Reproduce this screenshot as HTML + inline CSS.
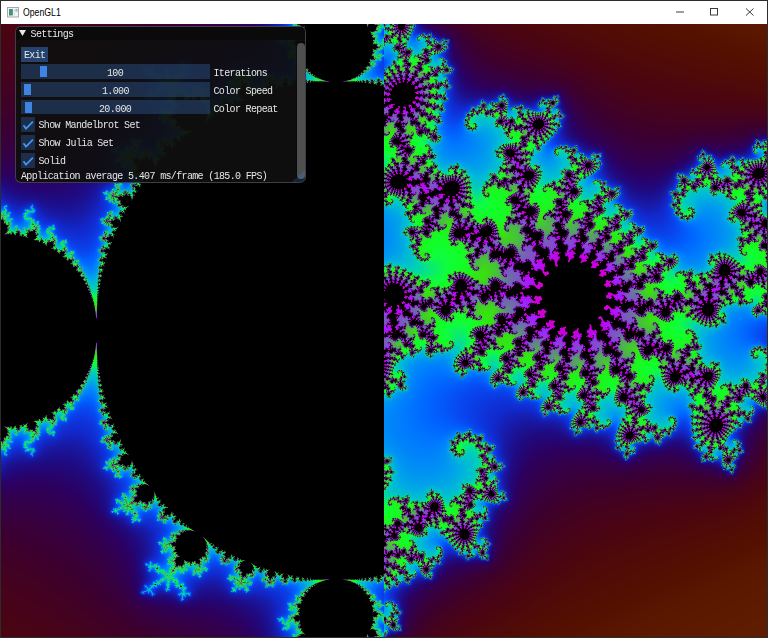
<!DOCTYPE html>
<html><head><meta charset="utf-8">
<style>
html,body{margin:0;padding:0;width:768px;height:638px;overflow:hidden;background:#3c3c3c;}
#win{position:absolute;left:0;top:0;width:768px;height:638px;background:#2e2c2b;}
#title{position:absolute;left:1px;top:1px;width:766px;height:23px;background:#fff;}
#title .t{position:absolute;left:21.8px;top:5.7px;font:10px/12px "Liberation Sans",sans-serif;color:#000;transform:scaleX(0.87);transform-origin:0 0;}
#cv{position:absolute;left:1px;top:24px;width:766px;height:613px;}
.ui{position:absolute;font-family:"Liberation Mono",monospace;color:#e6e6e6;font-size:10px;letter-spacing:-0.65px;white-space:pre;line-height:10px;}
#imw{position:absolute;left:14.6px;top:26.2px;width:291.9px;height:157.3px;border-radius:6px;background:rgba(15,15,15,0.94);box-sizing:border-box;border:1px solid rgba(110,110,128,0.5);overflow:hidden;}
#imt{position:absolute;left:0;top:0;width:100%;height:13px;background:#0a0a0a;}
.frame{position:absolute;background:rgba(41,74,122,0.54);}
.grab{position:absolute;background:#3d85e0;}
</style></head><body>
<div id="win">
<div id="title">
<svg style="position:absolute;left:5px;top:5px" width="13" height="12" viewBox="0 0 13 12">
<rect x="1.5" y="1.5" width="11" height="9.5" fill="#f4f4f4" stroke="#a8a8a8" stroke-width="1"/>
<rect x="3" y="3" width="3.8" height="6.5" fill="#3f9272"/>
<rect x="3" y="3" width="3.8" height="3" fill="#4a8fb0" opacity="0.6"/>
<rect x="7.8" y="3" width="0.8" height="6.5" fill="#d6d6d6"/>
<rect x="9.5" y="3" width="2" height="1.6" fill="#6fb0d8"/>
<rect x="9.5" y="4.6" width="2" height="1.2" fill="#8fd090"/>
</svg>
<div class="t">OpenGL1</div>
<svg style="position:absolute;left:0;top:0" width="766" height="23">
<line x1="675" y1="11" x2="683" y2="11" stroke="#3a3a3a" stroke-width="1"/>
<rect x="709.5" y="7.5" width="7" height="6.5" fill="none" stroke="#3a3a3a" stroke-width="1"/>
<line x1="745" y1="7.5" x2="752.5" y2="14.5" stroke="#3a3a3a" stroke-width="1"/>
<line x1="752.5" y1="7.5" x2="745" y2="14.5" stroke="#3a3a3a" stroke-width="1"/>
</svg>
</div>
<svg id="fb" style="position:absolute;left:1px;top:24px" width="766" height="613" shape-rendering="crispEdges"><path fill="#401" d="M0 0h16v8h-16zM488 0h48v8h-48zM0 8h8v8h-8zM496 8h56v8h-56zM0 16h8v8h-8zM512 16h64v8h-64zM0 24h8v8h-8zM536 24h56v8h-56zM552 32h56v8h-56zM576 40h48v8h-48zM592 48h56v8h-56zM600 56h80v8h-80zM616 64h104v8h-104zM640 72h128v8h-128zM672 80h96v8h-96zM760 448h8v8h-8zM752 456h16v8h-16zM736 464h32v8h-32zM688 472h64v8h-64zM640 480h96v8h-96zM608 488h104v8h-104zM592 496h88v8h-88zM576 504h72v8h-72zM560 512h64v8h-64zM552 520h56v8h-56zM544 528h48v8h-48zM528 536h48v8h-48zM520 544h40v8h-40zM512 552h40v8h-40zM504 560h40v8h-40zM488 568h40v8h-40zM0 576h8v8h-8zM480 576h40v8h-40zM0 584h24v8h-24zM464 584h40v8h-40zM0 592h40v8h-40zM456 592h40v8h-40zM0 600h48v8h-48zM440 600h40v8h-40zM0 608h64v8h-64zM432 608h40v8h-40z"/><path fill="#322" d="M16 0h8v8h-8zM32 0h40v8h-40z"/><path fill="#212" d="M24 0h8v8h-8zM128 0h120v8h-120zM56 120h8v8h-8zM488 256h8v8h-8zM560 328h8v8h-8z"/><path fill="#211" d="M72 0h56v8h-56z"/><path fill="#112" d="M248 0h8v8h-8zM24 16h16v8h-16zM272 16h16v8h-16zM272 24h16v8h-16zM272 32h16v8h-16zM264 40h32v8h-32zM272 48h24v8h-24zM208 56h16v8h-16zM248 56h16v8h-16zM16 72h8v8h-8zM208 72h8v8h-8zM16 88h8v8h-8zM32 88h128v8h-128zM176 88h32v8h-32zM152 96h16v8h-16zM16 104h8v8h-8zM32 104h8v8h-8zM152 104h24v8h-24zM136 112h24v8h-24zM112 120h16v8h-16zM136 120h24v8h-24zM112 128h8v8h-8zM112 136h8v8h-8zM288 152h8v8h-8zM88 320h8v8h-8z"/><path fill="#113" d="M256 0h24v8h-24z"/><path fill="#124" d="M280 0h8v8h-8zM136 56h24v8h-24zM176 56h32v8h-32zM152 72h8v8h-8z"/><path fill="#134" d="M288 0h8v8h-8zM160 56h16v8h-16z"/><path fill="#111" d="M296 0h8v8h-8zM368 0h8v8h-8zM24 8h8v8h-8zM72 8h240v8h-240zM16 16h8v8h-8zM40 16h232v8h-232zM288 16h8v8h-8zM304 16h8v8h-8zM48 24h224v8h-224zM288 24h8v8h-8zM304 24h8v8h-8zM48 32h224v8h-224zM288 32h8v8h-8zM304 32h8v8h-8zM304 40h8v8h-8zM232 56h8v8h-8zM264 56h32v8h-32zM320 56h8v8h-8zM272 64h24v8h-24zM304 64h8v8h-8zM216 72h80v8h-80zM304 72h8v8h-8zM280 80h16v8h-16zM304 80h8v8h-8zM208 88h88v8h-88zM304 88h8v8h-8zM144 96h8v8h-8zM168 96h128v8h-128zM304 96h8v8h-8zM40 104h112v8h-112zM176 104h120v8h-120zM304 104h8v8h-8zM376 104h8v8h-8zM112 112h24v8h-24zM160 112h136v8h-136zM304 112h8v8h-8zM128 120h8v8h-8zM160 120h136v8h-136zM304 120h8v8h-8zM64 128h48v8h-48zM128 128h168v8h-168zM304 128h8v8h-8zM64 136h48v8h-48zM120 136h176v8h-176zM304 136h8v8h-8zM264 144h32v8h-32zM304 144h8v8h-8zM152 152h8v8h-8zM272 152h16v8h-16zM48 224h8v8h-8zM104 224h8v8h-8zM96 264h8v8h-8zM376 288h8v8h-8zM376 312h8v8h-8zM376 448h8v8h-8zM376 504h8v8h-8zM216 520h8v8h-8zM232 528h8v8h-8zM240 544h8v8h-8zM376 544h8v8h-8zM320 552h8v8h-8zM360 568h8v8h-8zM296 592h8v8h-8zM368 608h8v8h-8z"/><path fill="#000" d="M304 0h64v8h-64zM312 8h56v8h-56zM312 16h56v8h-56zM312 24h56v8h-56zM312 32h56v8h-56zM312 40h48v8h-48zM320 48h32v8h-32zM328 56h16v8h-16zM312 64h64v8h-64zM392 64h16v8h-16zM312 72h64v8h-64zM392 72h16v8h-16zM312 80h64v8h-64zM312 88h72v8h-72zM312 96h72v8h-72zM312 104h64v8h-64zM312 112h64v8h-64zM312 120h64v8h-64zM312 128h64v8h-64zM312 136h64v8h-64zM312 144h64v8h-64zM304 152h72v8h-72zM392 152h8v8h-8zM144 160h232v8h-232zM448 160h8v8h-8zM136 168h240v8h-240zM128 176h248v8h-248zM128 184h248v8h-248zM120 192h256v8h-256zM120 200h256v8h-256zM112 208h264v8h-264zM0 216h32v8h-32zM112 216h264v8h-264zM0 224h48v8h-48zM112 224h264v8h-264zM0 232h64v8h-64zM104 232h272v8h-272zM0 240h72v8h-72zM104 240h272v8h-272zM520 240h8v8h-8zM544 240h8v8h-8zM560 240h24v8h-24zM720 240h8v8h-8zM0 248h80v8h-80zM104 248h272v8h-272zM552 248h40v8h-40zM0 256h80v8h-80zM104 256h272v8h-272zM456 256h8v8h-8zM544 256h56v8h-56zM0 264h88v8h-88zM104 264h296v8h-296zM528 264h8v8h-8zM544 264h56v8h-56zM0 272h88v8h-88zM96 272h304v8h-304zM544 272h56v8h-56zM0 280h88v8h-88zM96 280h280v8h-280zM528 280h8v8h-8zM544 280h56v8h-56zM704 280h8v8h-8zM0 288h88v8h-88zM96 288h280v8h-280zM544 288h48v8h-48zM0 296h376v8h-376zM568 296h16v8h-16zM592 296h8v8h-8zM0 304h376v8h-376zM0 312h376v8h-376zM0 320h88v8h-88zM96 320h280v8h-280zM0 328h88v8h-88zM96 328h280v8h-280zM0 336h88v8h-88zM104 336h272v8h-272zM0 344h80v8h-80zM104 344h272v8h-272zM0 352h80v8h-80zM104 352h272v8h-272zM0 360h72v8h-72zM104 360h272v8h-272zM0 368h64v8h-64zM104 368h272v8h-272zM0 376h56v8h-56zM112 376h264v8h-264zM0 384h48v8h-48zM112 384h264v8h-264zM0 392h32v8h-32zM112 392h264v8h-264zM120 400h256v8h-256zM712 400h8v8h-8zM120 408h256v8h-256zM120 416h256v8h-256zM128 424h248v8h-248zM120 432h256v8h-256zM136 440h240v8h-240zM144 448h232v8h-232zM152 456h224v8h-224zM136 464h16v8h-16zM160 464h216v8h-216zM160 472h216v8h-216zM168 480h208v8h-208zM176 488h200v8h-200zM192 496h184v8h-184zM192 504h184v8h-184zM176 512h24v8h-24zM208 512h176v8h-176zM176 520h24v8h-24zM224 520h152v8h-152zM184 528h16v8h-16zM240 528h136v8h-136zM256 536h120v8h-120zM288 544h88v8h-88zM328 552h16v8h-16zM312 560h40v8h-40zM304 568h56v8h-56zM304 576h64v8h-64zM304 584h64v8h-64zM304 592h64v8h-64zM304 600h64v8h-64zM304 608h56v8h-56z"/><path fill="#1a8" d="M376 0h8v8h-8zM496 136h8v8h-8zM528 136h8v8h-8zM552 152h8v8h-8zM576 168h8v8h-8zM720 168h8v8h-8zM24 200h8v8h-8zM448 320h8v8h-8zM392 336h8v8h-8zM544 368h8v8h-8zM576 376h8v8h-8zM472 440h8v8h-8zM408 472h8v8h-8z"/><path fill="#376" d="M384 0h8v8h-8zM544 80h8v8h-8zM592 136h8v8h-8zM712 352h8v8h-8zM640 376h8v8h-8zM448 416h8v8h-8zM456 520h8v8h-8z"/><path fill="#324" d="M392 0h8v8h-8zM392 96h8v8h-8zM504 120h8v8h-8zM712 160h8v8h-8zM744 168h8v8h-8zM488 200h8v8h-8zM584 200h8v8h-8zM448 208h8v8h-8zM472 224h8v8h-8zM440 288h8v8h-8zM496 304h8v8h-8zM512 320h8v8h-8zM464 336h8v8h-8zM624 352h8v8h-8zM664 352h8v8h-8zM704 368h8v8h-8zM392 504h8v8h-8z"/><path fill="#314" d="M400 0h8v8h-8zM8 120h8v8h-8zM8 128h8v8h-8zM8 136h8v8h-8zM584 136h8v8h-8zM384 152h8v8h-8zM448 152h8v8h-8zM456 160h8v8h-8zM568 160h8v8h-8zM416 168h8v8h-8zM424 192h8v8h-8zM760 200h8v8h-8zM560 208h8v8h-8zM592 216h8v8h-8zM488 224h8v8h-8zM616 240h8v8h-8zM624 256h8v8h-8zM720 264h8v8h-8zM624 280h8v8h-8zM472 304h8v8h-8zM600 320h8v8h-8zM536 328h8v8h-8zM608 328h8v8h-8zM576 392h8v8h-8zM464 464h8v8h-8zM392 496h8v8h-8zM464 504h8v8h-8z"/><path fill="#268" d="M408 0h8v8h-8zM472 80h8v8h-8zM592 128h8v8h-8zM696 136h8v8h-8zM760 320h8v8h-8zM552 384h8v8h-8zM568 392h8v8h-8zM688 400h8v8h-8zM472 408h8v8h-8zM496 440h8v8h-8zM400 552h8v8h-8z"/><path fill="#219" d="M416 0h8v8h-8zM560 96h8v8h-8zM560 104h8v8h-8zM712 128h8v8h-8zM88 160h8v8h-8zM632 168h8v8h-8zM648 168h8v8h-8zM40 176h8v8h-8zM72 176h16v8h-16zM56 184h16v8h-16zM520 400h16v8h-16zM544 400h16v8h-16zM512 408h8v8h-8zM584 408h8v8h-8zM736 408h8v8h-8zM504 416h8v8h-8zM48 424h32v8h-32zM504 424h8v8h-8zM16 432h8v8h-8zM32 432h8v8h-8zM80 432h8v8h-8zM504 432h8v8h-8zM0 440h8v8h-8zM88 440h8v8h-8zM504 440h8v8h-8zM96 456h8v8h-8zM488 488h8v8h-8zM120 496h8v8h-8zM432 544h8v8h-8zM200 560h16v8h-16zM152 568h8v8h-8zM168 568h8v8h-8zM224 568h8v8h-8zM248 576h16v8h-16zM264 592h8v8h-8z"/><path fill="#206" d="M424 0h8v8h-8zM448 16h8v8h-8zM448 24h8v8h-8zM456 40h8v8h-8zM464 56h8v8h-8zM504 64h8v8h-8zM704 120h8v8h-8zM736 120h8v8h-8zM624 144h8v8h-8zM664 144h8v8h-8zM0 152h8v8h-8zM632 152h24v8h-24zM544 416h24v8h-24zM528 424h8v8h-8zM600 424h8v8h-8zM648 424h16v8h-16zM680 424h8v8h-8zM520 432h8v8h-8zM712 440h8v8h-8zM16 448h48v8h-48zM512 448h8v8h-8zM0 456h8v8h-8zM56 456h24v8h-24zM512 456h8v8h-8zM72 464h16v8h-16zM80 472h8v8h-8zM88 480h8v8h-8zM96 488h8v8h-8zM496 488h8v8h-8zM104 496h8v8h-8zM112 504h8v8h-8zM120 512h8v8h-8zM120 520h8v8h-8zM128 528h8v8h-8zM128 536h8v8h-8zM448 536h24v8h-24zM480 536h8v8h-8zM128 544h8v8h-8zM432 552h8v8h-8zM416 560h8v8h-8zM168 576h8v8h-8zM192 576h24v8h-24zM224 584h16v8h-16zM240 592h8v8h-8zM400 592h8v8h-8zM248 600h8v8h-8zM248 608h8v8h-8zM392 608h8v8h-8z"/><path fill="#305" d="M432 0h8v8h-8zM456 32h8v8h-8zM464 40h8v8h-8zM464 48h16v8h-16zM472 56h32v8h-32zM512 64h32v8h-32zM560 72h8v8h-8zM568 88h8v8h-8zM576 96h8v8h-8zM576 104h16v8h-16zM592 112h8v8h-8zM744 112h8v8h-8zM608 120h8v8h-8zM688 120h8v8h-8zM712 120h24v8h-24zM616 128h8v8h-8zM672 128h16v8h-16zM0 136h8v8h-8zM624 136h48v8h-48zM0 144h8v8h-8zM640 144h16v8h-16zM760 392h8v8h-8zM752 400h8v8h-8zM744 416h8v8h-8zM552 424h40v8h-40zM744 424h8v8h-8zM536 432h80v8h-80zM640 432h16v8h-16zM680 432h8v8h-8zM528 440h24v8h-24zM696 440h16v8h-16zM736 440h8v8h-8zM520 448h16v8h-16zM520 456h8v8h-8zM0 464h64v8h-64zM520 464h8v8h-8zM16 472h56v8h-56zM512 472h8v8h-8zM56 480h32v8h-32zM512 480h8v8h-8zM64 488h24v8h-24zM504 488h8v8h-8zM80 496h16v8h-16zM496 496h8v8h-8zM88 504h16v8h-16zM496 504h8v8h-8zM96 512h16v8h-16zM104 520h16v8h-16zM112 528h8v8h-8zM112 536h16v8h-16zM120 544h8v8h-8zM448 544h8v8h-8zM120 552h8v8h-8zM440 552h8v8h-8zM128 560h8v8h-8zM424 560h8v8h-8zM128 568h8v8h-8zM416 568h8v8h-8zM136 576h16v8h-16zM408 576h8v8h-8zM160 584h48v8h-48zM192 592h40v8h-40zM216 600h24v8h-24zM224 608h24v8h-24z"/><path fill="#304" d="M440 0h8v8h-8zM448 8h8v8h-8zM456 16h8v8h-8zM456 24h8v8h-8zM464 32h8v8h-8zM472 40h16v8h-16zM480 48h24v8h-24zM504 56h40v8h-40zM560 64h8v8h-8zM568 72h8v8h-8zM568 80h16v8h-16zM576 88h8v8h-8zM584 96h16v8h-16zM592 104h16v8h-16zM752 104h16v8h-16zM600 112h24v8h-24zM696 112h48v8h-48zM0 120h8v8h-8zM400 120h8v8h-8zM616 120h72v8h-72zM0 128h8v8h-8zM624 128h48v8h-48zM520 144h8v8h-8zM520 152h8v8h-8zM752 152h8v8h-8zM400 160h8v8h-8zM440 168h8v8h-8zM512 176h8v8h-8zM448 184h8v8h-8zM600 208h8v8h-8zM576 224h8v8h-8zM568 232h8v8h-8zM584 232h8v8h-8zM608 248h8v8h-8zM384 256h8v8h-8zM632 256h8v8h-8zM608 264h8v8h-8zM608 272h8v8h-8zM632 280h8v8h-8zM664 280h8v8h-8zM696 280h8v8h-8zM608 320h8v8h-8zM648 320h16v8h-16zM584 344h8v8h-8zM616 344h8v8h-8zM624 368h8v8h-8zM704 400h8v8h-8zM760 400h8v8h-8zM752 408h8v8h-8zM752 416h8v8h-8zM656 432h24v8h-24zM744 432h8v8h-8zM552 440h144v8h-144zM536 448h40v8h-40zM712 448h16v8h-16zM528 456h24v8h-24zM528 464h16v8h-16zM0 472h16v8h-16zM520 472h16v8h-16zM0 480h56v8h-56zM520 480h8v8h-8zM0 488h64v8h-64zM512 488h8v8h-8zM24 496h56v8h-56zM504 496h16v8h-16zM48 504h40v8h-40zM504 504h8v8h-8zM56 512h40v8h-40zM496 512h16v8h-16zM72 520h32v8h-32zM496 520h8v8h-8zM80 528h32v8h-32zM496 528h8v8h-8zM88 536h24v8h-24zM488 536h8v8h-8zM96 544h24v8h-24zM456 544h24v8h-24zM104 552h16v8h-16zM448 552h8v8h-8zM112 560h16v8h-16zM432 560h16v8h-16zM120 568h8v8h-8zM424 568h8v8h-8zM120 576h16v8h-16zM416 576h8v8h-8zM136 584h24v8h-24zM408 584h8v8h-8zM144 592h48v8h-48zM408 592h8v8h-8zM168 600h48v8h-48zM184 608h40v8h-40zM400 608h8v8h-8z"/><path fill="#303" d="M448 0h8v8h-8zM456 8h8v8h-8zM464 16h8v8h-8zM464 24h16v8h-16zM472 32h16v8h-16zM488 40h16v8h-16zM504 48h24v8h-24zM392 56h8v8h-8zM544 56h16v8h-16zM568 64h8v8h-8zM384 72h8v8h-8zM408 72h8v8h-8zM576 72h8v8h-8zM400 80h8v8h-8zM584 80h8v8h-8zM584 88h16v8h-16zM528 96h8v8h-8zM600 96h16v8h-16zM0 104h8v8h-8zM608 104h24v8h-24zM736 104h16v8h-16zM0 112h8v8h-8zM624 112h72v8h-72zM504 128h8v8h-8zM456 200h8v8h-8zM544 232h8v8h-8zM528 248h8v8h-8zM480 264h8v8h-8zM520 264h8v8h-8zM672 272h8v8h-8zM536 280h8v8h-8zM552 304h8v8h-8zM640 320h8v8h-8zM760 408h8v8h-8zM752 424h8v8h-8zM576 448h80v8h-80zM680 448h32v8h-32zM736 448h8v8h-8zM552 456h40v8h-40zM544 464h24v8h-24zM536 472h16v8h-16zM528 480h16v8h-16zM520 488h16v8h-16zM0 496h24v8h-24zM520 496h8v8h-8zM0 504h48v8h-48zM512 504h8v8h-8zM16 512h40v8h-40zM512 512h8v8h-8zM40 520h32v8h-32zM504 520h8v8h-8zM48 528h32v8h-32zM64 536h24v8h-24zM496 536h8v8h-8zM72 544h24v8h-24zM480 544h8v8h-8zM80 552h24v8h-24zM456 552h16v8h-16zM88 560h24v8h-24zM448 560h8v8h-8zM96 568h24v8h-24zM432 568h16v8h-16zM104 576h16v8h-16zM424 576h8v8h-8zM120 584h16v8h-16zM416 584h8v8h-8zM128 592h16v8h-16zM416 592h8v8h-8zM144 600h24v8h-24zM408 600h8v8h-8zM152 608h32v8h-32z"/><path fill="#402" d="M456 0h32v8h-32zM464 8h32v8h-32zM472 16h40v8h-40zM488 24h48v8h-48zM0 32h8v8h-8zM496 32h56v8h-56zM0 40h8v8h-8zM520 40h56v8h-56zM0 48h8v8h-8zM552 48h40v8h-40zM0 56h8v8h-8zM568 56h32v8h-32zM0 64h8v8h-8zM584 64h32v8h-32zM0 72h8v8h-8zM592 72h48v8h-48zM0 80h8v8h-8zM600 80h72v8h-72zM616 88h152v8h-152zM632 96h136v8h-136zM760 424h8v8h-8zM760 432h8v8h-8zM752 440h16v8h-16zM744 448h16v8h-16zM648 456h64v8h-64zM728 456h24v8h-24zM600 464h136v8h-136zM568 472h120v8h-120zM560 480h80v8h-80zM544 488h64v8h-64zM536 496h56v8h-56zM528 504h48v8h-48zM528 512h32v8h-32zM520 520h32v8h-32zM0 528h16v8h-16zM512 528h32v8h-32zM0 536h32v8h-32zM504 536h24v8h-24zM0 544h48v8h-48zM496 544h24v8h-24zM0 552h64v8h-64zM488 552h24v8h-24zM0 560h72v8h-72zM472 560h32v8h-32zM0 568h80v8h-80zM456 568h32v8h-32zM8 576h80v8h-80zM440 576h40v8h-40zM24 584h80v8h-80zM432 584h32v8h-32zM40 592h72v8h-72zM424 592h32v8h-32zM48 600h72v8h-72zM424 600h16v8h-16zM64 608h64v8h-64zM416 608h16v8h-16z"/><path fill="#501" d="M536 0h16v8h-16zM552 8h16v8h-16zM576 16h8v8h-8zM592 24h16v8h-16zM608 32h16v8h-16zM624 40h24v8h-24zM648 48h24v8h-24zM680 56h32v8h-32zM720 64h32v8h-32zM752 472h8v8h-8zM736 480h8v8h-8zM712 488h16v8h-16zM680 496h24v8h-24zM648 504h24v8h-24zM624 512h24v8h-24zM608 520h16v8h-16zM592 528h16v8h-16zM576 536h16v8h-16zM560 544h16v8h-16zM552 552h16v8h-16zM544 560h8v8h-8zM528 568h16v8h-16zM520 576h8v8h-8zM504 584h16v8h-16zM496 592h8v8h-8zM480 600h8v8h-8zM472 608h8v8h-8z"/><path fill="#511" d="M552 0h16v8h-16zM568 8h24v8h-24zM584 16h24v8h-24zM608 24h24v8h-24zM624 32h24v8h-24zM648 40h32v8h-32zM672 48h40v8h-40zM712 56h32v8h-32zM752 64h16v8h-16zM760 472h8v8h-8zM744 480h16v8h-16zM728 488h16v8h-16zM704 496h24v8h-24zM672 504h32v8h-32zM648 512h32v8h-32zM624 520h32v8h-32zM608 528h24v8h-24zM592 536h24v8h-24zM576 544h24v8h-24zM568 552h16v8h-16zM552 560h16v8h-16zM544 568h16v8h-16zM528 576h16v8h-16zM520 584h8v8h-8zM504 592h16v8h-16zM488 600h16v8h-16zM480 608h16v8h-16z"/><path fill="#510" d="M568 0h200v8h-200zM592 8h176v8h-176zM608 16h160v8h-160zM632 24h136v8h-136zM648 32h120v8h-120zM680 40h88v8h-88zM712 48h56v8h-56zM744 56h24v8h-24zM760 480h8v8h-8zM744 488h24v8h-24zM728 496h40v8h-40zM704 504h64v8h-64zM680 512h88v8h-88zM656 520h112v8h-112zM632 528h136v8h-136zM616 536h152v8h-152zM600 544h168v8h-168zM584 552h184v8h-184zM568 560h192v8h-192zM560 568h184v8h-184zM544 576h192v8h-192zM528 584h192v8h-192zM520 592h184v8h-184zM504 600h184v8h-184zM496 608h176v8h-176z"/><path fill="#411" d="M8 8h8v8h-8z"/><path fill="#444" d="M16 8h8v8h-8zM32 8h8v8h-8zM56 8h16v8h-16zM224 64h16v8h-16zM216 80h24v8h-24zM104 96h8v8h-8zM40 112h8v8h-8zM40 136h8v8h-8zM56 136h8v8h-8zM192 144h8v8h-8zM248 144h8v8h-8zM24 152h8v8h-8zM448 200h8v8h-8zM744 200h8v8h-8zM736 248h8v8h-8zM696 392h8v8h-8z"/><path fill="#222" d="M40 8h8v8h-8zM208 40h8v8h-8zM248 40h8v8h-8zM264 48h8v8h-8zM240 64h8v8h-8zM56 112h8v8h-8zM88 112h8v8h-8zM32 120h24v8h-24zM64 120h16v8h-16zM88 120h8v8h-8zM32 128h24v8h-24zM32 136h8v8h-8zM48 136h8v8h-8zM16 144h8v8h-8zM40 144h8v8h-8zM80 144h8v8h-8zM120 144h8v8h-8zM136 144h8v8h-8zM152 144h8v8h-8zM168 144h8v8h-8zM200 144h16v8h-16zM240 144h8v8h-8zM80 152h8v8h-8zM120 152h8v8h-8zM168 152h16v8h-16zM200 152h8v8h-8zM240 152h16v8h-16zM264 152h8v8h-8z"/><path fill="#333" d="M48 8h8v8h-8zM296 16h8v8h-8zM240 40h8v8h-8zM232 48h16v8h-16zM240 80h8v8h-8zM272 80h8v8h-8zM56 96h8v8h-8zM112 96h8v8h-8zM64 112h24v8h-24zM56 128h8v8h-8zM24 144h16v8h-16zM48 144h8v8h-8zM64 144h16v8h-16zM88 144h8v8h-8zM104 144h8v8h-8zM128 144h8v8h-8zM144 144h8v8h-8zM160 144h8v8h-8zM176 144h16v8h-16zM216 144h24v8h-24zM256 144h8v8h-8zM32 152h48v8h-48zM88 152h24v8h-24zM128 152h24v8h-24zM160 152h8v8h-8zM184 152h16v8h-16zM208 152h32v8h-32zM256 152h8v8h-8zM744 256h8v8h-8zM424 272h8v8h-8zM576 368h8v8h-8z"/><path fill="#164" d="M368 8h8v8h-8zM368 600h8v8h-8z"/><path fill="#08d" d="M376 8h8v8h-8zM608 392h8v8h-8zM376 600h8v8h-8z"/><path fill="#365" d="M384 8h8v8h-8zM392 16h8v8h-8zM432 80h8v8h-8zM520 88h8v8h-8zM544 104h8v8h-8zM568 128h8v8h-8zM560 144h8v8h-8zM760 168h8v8h-8zM672 176h8v8h-8zM736 176h8v8h-8zM408 200h8v8h-8zM456 328h8v8h-8zM728 360h8v8h-8zM720 408h8v8h-8zM472 416h8v8h-8zM480 424h8v8h-8zM424 496h8v8h-8zM448 512h8v8h-8zM424 536h8v8h-8zM400 544h8v8h-8zM384 592h8v8h-8z"/><path fill="#354" d="M392 8h8v8h-8zM424 24h8v8h-8zM416 40h8v8h-8zM424 48h8v8h-8zM424 104h8v8h-8zM576 144h8v8h-8zM736 144h8v8h-8zM496 152h8v8h-8zM696 152h8v8h-8zM672 168h8v8h-8zM624 216h8v8h-8zM752 240h8v8h-8zM448 256h8v8h-8zM432 264h8v8h-8zM736 272h8v8h-8zM760 272h8v8h-8zM392 312h8v8h-8zM408 320h8v8h-8zM472 336h8v8h-8zM560 352h8v8h-8zM520 360h8v8h-8zM584 384h8v8h-8zM472 464h8v8h-8zM456 472h8v8h-8zM464 480h8v8h-8z"/><path fill="#374" d="M400 8h8v8h-8zM392 40h8v8h-8zM512 96h8v8h-8zM520 120h8v8h-8zM416 128h8v8h-8zM528 160h8v8h-8zM464 168h8v8h-8zM504 176h8v8h-8zM464 232h8v8h-8zM736 240h8v8h-8zM752 256h8v8h-8zM656 264h8v8h-8zM720 272h8v8h-8zM464 288h8v8h-8zM392 352h8v8h-8zM384 360h8v8h-8zM552 376h8v8h-8zM696 408h8v8h-8zM712 416h8v8h-8zM480 440h8v8h-8zM432 496h8v8h-8zM440 504h8v8h-8zM408 520h8v8h-8zM392 536h8v8h-8zM384 552h8v8h-8z"/><path fill="#16d" d="M408 8h8v8h-8zM32 192h8v8h-8zM64 216h8v8h-8zM96 400h8v8h-8zM464 400h8v8h-8zM120 464h8v8h-8zM376 560h8v8h-8zM288 568h8v8h-8z"/><path fill="#279" d="M416 8h8v8h-8zM480 512h8v8h-8zM384 560h8v8h-8z"/><path fill="#258" d="M424 8h8v8h-8zM544 384h8v8h-8zM720 440h8v8h-8zM392 592h8v8h-8z"/><path fill="#218" d="M432 8h8v8h-8zM456 64h8v8h-8zM512 72h8v8h-8zM568 112h8v8h-8zM584 120h8v8h-8zM744 120h8v8h-8zM600 128h8v8h-8zM720 128h8v8h-8zM608 144h8v8h-8zM616 152h8v8h-8zM664 152h8v8h-8zM0 160h8v8h-8zM80 160h8v8h-8zM624 160h8v8h-8zM656 160h8v8h-8zM8 168h32v8h-32zM64 168h24v8h-24zM640 168h8v8h-8zM48 176h24v8h-24zM760 384h8v8h-8zM536 400h8v8h-8zM520 408h16v8h-16zM560 408h8v8h-8zM512 416h8v8h-8zM600 416h8v8h-8zM664 416h8v8h-8zM680 416h8v8h-8zM512 424h8v8h-8zM608 424h8v8h-8zM688 424h8v8h-8zM40 432h40v8h-40zM8 440h8v8h-8zM72 440h16v8h-16zM88 448h8v8h-8zM504 448h8v8h-8zM88 456h8v8h-8zM504 456h8v8h-8zM96 464h8v8h-8zM504 464h8v8h-8zM496 480h8v8h-8zM104 488h8v8h-8zM128 504h8v8h-8zM136 512h8v8h-8zM136 520h8v8h-8zM136 528h8v8h-8zM136 536h8v8h-8zM440 536h8v8h-8zM136 544h8v8h-8zM136 552h8v8h-8zM136 568h8v8h-8zM160 568h8v8h-8zM192 568h8v8h-8zM216 568h8v8h-8zM176 576h8v8h-8zM232 576h16v8h-16zM248 584h16v8h-16zM256 592h8v8h-8zM264 600h8v8h-8zM264 608h8v8h-8z"/><path fill="#216" d="M440 8h8v8h-8zM696 120h8v8h-8zM8 152h8v8h-8zM736 432h8v8h-8z"/><path fill="#412" d="M8 16h8v8h-8zM8 24h8v8h-8zM8 32h8v8h-8zM8 40h8v8h-8zM8 48h8v8h-8zM8 56h8v8h-8z"/><path fill="#131" d="M368 16h8v8h-8zM88 280h8v8h-8zM184 504h8v8h-8z"/><path fill="#2a8" d="M376 16h8v8h-8zM472 88h8v8h-8zM104 168h8v8h-8zM472 448h8v8h-8zM376 608h8v8h-8z"/><path fill="#199" d="M384 16h8v8h-8zM528 128h8v8h-8zM448 336h8v8h-8zM488 344h8v8h-8zM648 360h8v8h-8zM736 392h8v8h-8zM408 536h8v8h-8zM368 568h8v8h-8z"/><path fill="#286" d="M400 16h8v8h-8zM424 16h8v8h-8zM432 88h8v8h-8zM496 120h8v8h-8zM496 128h8v8h-8zM728 144h8v8h-8zM712 296h8v8h-8zM760 344h8v8h-8zM752 352h8v8h-8zM544 360h8v8h-8zM664 360h8v8h-8zM72 368h8v8h-8zM688 376h8v8h-8zM112 432h8v8h-8zM448 472h8v8h-8zM288 592h8v8h-8z"/><path fill="#08e" d="M408 16h8v8h-8zM368 48h8v8h-8zM440 112h8v8h-8zM472 112h8v8h-8zM472 120h8v8h-8zM448 128h24v8h-24zM544 128h8v8h-8zM712 192h8v8h-8zM712 216h8v8h-8zM664 224h8v8h-8zM696 232h8v8h-8zM80 240h8v8h-8zM728 288h8v8h-8zM744 288h8v8h-8zM416 336h8v8h-8zM408 344h8v8h-8zM680 376h8v8h-8zM384 416h8v8h-8zM392 424h8v8h-8zM400 432h8v8h-8zM432 432h8v8h-8zM408 440h24v8h-24zM208 528h8v8h-8zM296 560h8v8h-8z"/><path fill="#0ad" d="M416 16h8v8h-8zM488 104h8v8h-8zM488 112h8v8h-8zM440 136h8v8h-8zM552 136h8v8h-8zM472 144h8v8h-8zM720 144h8v8h-8zM392 184h8v8h-8zM720 184h8v8h-8zM728 200h8v8h-8zM728 208h8v8h-8zM400 216h8v8h-8zM728 216h8v8h-8zM400 224h8v8h-8zM384 232h16v8h-16zM696 240h8v8h-8zM744 280h8v8h-8zM704 304h8v8h-8zM416 328h8v8h-8zM704 328h8v8h-8zM400 336h8v8h-8zM720 344h8v8h-8zM736 344h16v8h-16zM656 368h8v8h-8zM680 368h8v8h-8zM616 384h8v8h-8zM448 432h8v8h-8zM392 440h8v8h-8zM456 440h8v8h-8zM392 448h8v8h-8zM448 448h8v8h-8zM400 456h8v8h-8zM440 456h16v8h-16zM408 464h16v8h-16zM424 520h8v8h-8z"/><path fill="#346" d="M432 16h8v8h-8zM24 32h16v8h-16zM104 64h8v8h-8zM720 432h8v8h-8z"/><path fill="#367" d="M440 16h8v8h-8zM432 24h8v8h-8zM432 40h8v8h-8zM472 520h16v8h-16z"/><path fill="#234" d="M16 24h8v8h-8zM24 40h8v8h-8zM48 40h56v8h-56zM128 40h16v8h-16zM192 40h16v8h-16zM144 48h56v8h-56zM112 56h16v8h-16zM32 64h64v8h-64zM128 64h16v8h-16zM168 64h16v8h-16zM192 64h8v8h-8zM32 80h64v8h-64zM136 80h8v8h-8zM168 80h40v8h-40zM24 88h8v8h-8zM296 152h8v8h-8z"/><path fill="#568" d="M24 24h8v8h-8z"/><path fill="#457" d="M32 24h8v8h-8z"/><path fill="#356" d="M40 24h8v8h-8zM480 80h8v8h-8zM584 144h8v8h-8zM736 192h8v8h-8zM632 200h8v8h-8zM760 376h8v8h-8zM736 384h8v8h-8zM656 408h8v8h-8zM488 472h8v8h-8zM472 488h8v8h-8z"/><path fill="#555" d="M296 24h8v8h-8zM296 32h8v8h-8zM296 40h8v8h-8zM296 48h8v8h-8zM296 56h8v8h-8zM248 64h24v8h-24zM296 64h8v8h-8zM296 72h8v8h-8zM248 80h24v8h-24zM296 80h8v8h-8zM296 88h8v8h-8zM48 96h8v8h-8zM72 96h8v8h-8zM96 96h8v8h-8zM128 96h8v8h-8zM296 96h8v8h-8zM296 104h8v8h-8zM296 112h8v8h-8zM296 120h8v8h-8zM296 128h8v8h-8zM296 136h8v8h-8zM296 144h8v8h-8z"/><path fill="#153" d="M368 24h8v8h-8zM352 48h8v8h-8zM120 424h8v8h-8zM296 600h8v8h-8z"/><path fill="#19b" d="M376 24h8v8h-8zM432 128h8v8h-8zM608 176h8v8h-8zM760 176h8v8h-8zM72 232h8v8h-8zM80 360h8v8h-8zM48 400h8v8h-8zM8 408h8v8h-8zM712 424h8v8h-8zM160 512h8v8h-8zM200 536h8v8h-8zM176 560h8v8h-8zM232 560h8v8h-8zM376 576h8v8h-8z"/><path fill="#09e" d="M384 24h8v8h-8zM480 112h8v8h-8zM480 120h8v8h-8zM440 128h8v8h-8zM472 128h16v8h-16zM536 128h8v8h-8zM464 136h16v8h-16zM544 136h8v8h-8zM704 176h8v8h-8zM696 184h24v8h-24zM384 192h8v8h-8zM384 200h16v8h-16zM720 200h8v8h-8zM384 208h16v8h-16zM720 208h8v8h-8zM384 216h16v8h-16zM720 216h8v8h-8zM384 224h8v8h-8zM88 248h8v8h-8zM712 304h8v8h-8zM704 312h16v8h-16zM712 320h8v8h-8zM712 328h16v8h-16zM408 336h8v8h-8zM720 336h24v8h-24zM88 360h8v8h-8zM392 368h8v8h-8zM384 376h8v8h-8zM656 376h16v8h-16zM664 384h8v8h-8zM384 424h8v8h-8zM440 424h8v8h-8zM392 432h8v8h-8zM440 432h8v8h-8zM400 440h8v8h-8zM432 440h16v8h-16zM400 448h48v8h-48zM416 456h8v8h-8zM424 512h8v8h-8z"/><path fill="#277" d="M392 24h8v8h-8zM464 88h8v8h-8zM552 96h8v8h-8zM760 128h8v8h-8zM752 320h8v8h-8zM688 392h8v8h-8zM104 408h8v8h-8zM480 416h8v8h-8zM448 424h8v8h-8zM392 552h8v8h-8z"/><path fill="#425" d="M400 24h8v8h-8zM496 80h8v8h-8zM504 96h8v8h-8zM520 112h8v8h-8zM400 136h8v8h-8zM440 152h8v8h-8zM384 160h8v8h-8zM416 176h8v8h-8zM456 176h8v8h-8zM552 184h8v8h-8zM592 184h8v8h-8zM512 192h8v8h-8zM624 240h8v8h-8zM656 240h8v8h-8zM728 256h8v8h-8zM696 288h8v8h-8zM416 304h8v8h-8zM472 320h8v8h-8zM520 320h8v8h-8zM504 328h8v8h-8zM680 328h8v8h-8zM552 368h8v8h-8zM720 376h8v8h-8zM632 384h8v8h-8zM720 400h8v8h-8zM712 408h8v8h-8zM408 528h8v8h-8z"/><path fill="#289" d="M408 24h8v8h-8zM400 360h8v8h-8z"/><path fill="#288" d="M416 24h8v8h-8zM432 96h8v8h-8zM752 120h8v8h-8zM720 136h8v8h-8zM688 152h8v8h-8zM112 176h8v8h-8zM704 232h8v8h-8zM424 328h8v8h-8zM720 416h8v8h-8zM424 464h8v8h-8zM216 528h8v8h-8zM232 544h8v8h-8zM384 576h8v8h-8z"/><path fill="#249" d="M440 24h8v8h-8zM504 72h8v8h-8zM672 152h8v8h-8zM736 400h8v8h-8zM664 408h8v8h-8zM640 416h8v8h-8zM456 528h8v8h-8zM408 552h8v8h-8zM392 576h8v8h-8z"/><path fill="#403" d="M480 24h8v8h-8zM488 32h8v8h-8zM504 40h16v8h-16zM528 48h24v8h-24zM560 56h8v8h-8zM576 64h8v8h-8zM584 72h8v8h-8zM592 80h8v8h-8zM0 88h8v8h-8zM600 88h16v8h-16zM0 96h8v8h-8zM616 96h16v8h-16zM632 104h104v8h-104zM760 416h8v8h-8zM752 432h8v8h-8zM744 440h8v8h-8zM656 448h24v8h-24zM592 456h56v8h-56zM712 456h16v8h-16zM568 464h32v8h-32zM552 472h16v8h-16zM544 480h16v8h-16zM536 488h8v8h-8zM528 496h8v8h-8zM520 504h8v8h-8zM0 512h16v8h-16zM520 512h8v8h-8zM0 520h40v8h-40zM512 520h8v8h-8zM16 528h32v8h-32zM504 528h8v8h-8zM32 536h32v8h-32zM48 544h24v8h-24zM488 544h8v8h-8zM64 552h16v8h-16zM472 552h16v8h-16zM72 560h16v8h-16zM456 560h16v8h-16zM80 568h16v8h-16zM448 568h8v8h-8zM88 576h16v8h-16zM432 576h8v8h-8zM104 584h16v8h-16zM424 584h8v8h-8zM112 592h16v8h-16zM120 600h24v8h-24zM416 600h8v8h-8zM128 608h24v8h-24zM408 608h8v8h-8z"/><path fill="#223" d="M16 32h8v8h-8zM216 40h24v8h-24zM256 40h8v8h-8zM208 48h16v8h-16zM32 56h64v8h-64zM136 96h8v8h-8zM32 112h8v8h-8zM80 120h8v8h-8zM96 120h16v8h-16zM16 152h8v8h-8zM480 272h8v8h-8z"/><path fill="#235" d="M40 32h8v8h-8zM32 40h8v8h-8zM120 40h8v8h-8zM144 40h48v8h-48zM32 48h8v8h-8zM120 48h8v8h-8zM96 64h8v8h-8zM144 64h24v8h-24zM184 64h8v8h-8zM200 64h8v8h-8zM24 72h8v8h-8zM144 80h24v8h-24zM24 120h8v8h-8zM24 128h8v8h-8z"/><path fill="#275" d="M368 32h8v8h-8zM400 176h8v8h-8zM32 400h8v8h-8zM192 536h8v8h-8z"/><path fill="#17c" d="M376 32h8v8h-8zM464 104h8v8h-8zM752 128h8v8h-8zM96 216h8v8h-8zM24 424h8v8h-8zM168 496h8v8h-8zM440 512h8v8h-8zM152 536h8v8h-8zM224 536h8v8h-8zM200 544h8v8h-8zM248 552h8v8h-8z"/><path fill="#07e" d="M384 32h8v8h-8zM656 216h8v8h-8zM744 320h8v8h-8zM80 368h8v8h-8zM16 408h8v8h-8zM160 536h8v8h-8zM184 544h8v8h-8zM176 552h8v8h-8z"/><path fill="#297" d="M392 32h8v8h-8zM512 88h8v8h-8zM704 160h8v8h-8zM600 176h8v8h-8zM32 200h8v8h-8zM736 200h8v8h-8zM632 208h8v8h-8zM696 296h8v8h-8zM392 360h8v8h-8zM688 384h8v8h-8zM744 384h8v8h-8zM664 400h8v8h-8zM104 416h8v8h-8zM128 464h8v8h-8zM472 472h8v8h-8z"/><path fill="#454" d="M400 32h8v8h-8zM416 32h8v8h-8zM400 40h8v8h-8zM384 48h8v8h-8zM416 96h8v8h-8zM744 160h8v8h-8zM408 184h8v8h-8zM584 184h8v8h-8zM488 232h8v8h-8zM400 248h8v8h-8zM640 256h8v8h-8zM688 264h8v8h-8zM424 280h8v8h-8zM760 280h8v8h-8zM512 336h8v8h-8zM552 336h8v8h-8zM384 352h8v8h-8zM560 360h8v8h-8zM592 368h8v8h-8zM640 400h8v8h-8zM440 488h8v8h-8zM400 528h8v8h-8z"/><path fill="#2d3" d="M408 32h8v8h-8zM568 176h8v8h-8zM424 224h8v8h-8zM744 240h8v8h-8zM664 264h8v8h-8zM664 296h8v8h-8z"/><path fill="#266" d="M424 32h8v8h-8zM432 112h8v8h-8zM672 184h8v8h-8zM96 368h8v8h-8zM624 424h8v8h-8zM176 504h8v8h-8zM248 544h8v8h-8zM376 552h8v8h-8z"/><path fill="#0ac" d="M432 32h8v8h-8zM488 120h8v8h-8zM488 128h8v8h-8zM704 168h8v8h-8zM40 208h8v8h-8zM448 328h8v8h-8z"/><path fill="#259" d="M440 32h8v8h-8zM520 80h8v8h-8zM704 128h8v8h-8zM608 160h8v8h-8zM432 536h8v8h-8zM416 544h8v8h-8z"/><path fill="#207" d="M448 32h8v8h-8zM456 48h8v8h-8zM472 64h24v8h-24zM560 80h8v8h-8zM568 104h8v8h-8zM576 112h8v8h-8zM592 120h8v8h-8zM608 136h8v8h-8zM680 136h8v8h-8zM616 144h8v8h-8zM624 152h8v8h-8zM656 152h8v8h-8zM8 160h72v8h-72zM640 160h8v8h-8zM528 416h16v8h-16zM568 416h32v8h-32zM520 424h8v8h-8zM640 424h8v8h-8zM512 432h8v8h-8zM32 440h32v8h-32zM512 440h8v8h-8zM8 448h8v8h-8zM64 448h16v8h-16zM80 456h8v8h-8zM88 464h8v8h-8zM88 472h8v8h-8zM96 480h8v8h-8zM120 504h8v8h-8zM488 504h8v8h-8zM128 520h8v8h-8zM184 576h8v8h-8zM216 576h16v8h-16zM400 576h8v8h-8zM240 584h8v8h-8zM248 592h8v8h-8zM256 600h8v8h-8zM256 608h8v8h-8z"/><path fill="#123" d="M16 40h8v8h-8zM16 56h8v8h-8zM32 72h120v8h-120zM160 72h48v8h-48zM16 80h8v8h-8zM16 96h8v8h-8zM16 112h8v8h-8zM16 120h8v8h-8zM16 136h8v8h-8z"/><path fill="#369" d="M40 40h8v8h-8z"/><path fill="#345" d="M104 40h8v8h-8zM104 48h8v8h-8zM128 80h8v8h-8zM496 96h8v8h-8zM680 152h8v8h-8zM720 152h8v8h-8zM608 168h8v8h-8zM648 216h8v8h-8zM640 224h8v8h-8zM408 504h8v8h-8z"/><path fill="#446" d="M112 40h8v8h-8zM560 168h8v8h-8zM432 192h8v8h-8zM456 280h8v8h-8zM688 280h8v8h-8zM488 312h8v8h-8zM616 328h8v8h-8zM680 336h8v8h-8zM384 344h8v8h-8zM728 368h8v8h-8zM408 488h8v8h-8z"/><path fill="#132" d="M360 40h8v8h-8zM368 56h8v8h-8zM120 168h8v8h-8zM120 184h8v8h-8zM112 192h8v8h-8zM16 208h8v8h-8zM40 216h8v8h-8zM96 256h8v8h-8zM96 352h8v8h-8zM48 384h8v8h-8zM0 408h8v8h-8zM136 448h8v8h-8zM200 520h8v8h-8zM224 528h8v8h-8zM296 576h8v8h-8z"/><path fill="#18b" d="M368 40h8v8h-8zM720 296h8v8h-8zM464 344h8v8h-8zM104 432h8v8h-8zM112 448h8v8h-8z"/><path fill="#14e" d="M376 40h8v8h-8zM664 200h8v8h-8zM56 208h8v8h-8zM88 216h8v8h-8zM472 368h16v8h-16zM504 368h8v8h-8zM464 376h8v8h-8zM80 384h8v8h-8zM464 384h8v8h-8zM88 392h8v8h-8zM464 392h8v8h-8zM472 400h8v8h-8zM120 456h8v8h-8zM144 488h8v8h-8zM160 504h8v8h-8z"/><path fill="#278" d="M384 40h8v8h-8zM512 80h8v8h-8zM432 104h8v8h-8zM576 128h8v8h-8zM688 144h8v8h-8zM400 352h8v8h-8zM96 384h8v8h-8zM568 400h8v8h-8zM648 408h8v8h-8zM480 472h8v8h-8z"/><path fill="#474" d="M408 40h8v8h-8zM512 160h8v8h-8zM456 184h8v8h-8zM696 256h8v8h-8zM728 264h8v8h-8zM680 280h8v8h-8zM648 328h8v8h-8zM536 344h8v8h-8zM688 360h8v8h-8zM728 392h8v8h-8zM480 456h8v8h-8z"/><path fill="#2b4" d="M424 40h8v8h-8zM480 168h8v8h-8zM408 192h8v8h-8zM544 352h8v8h-8zM568 360h8v8h-8zM456 416h8v8h-8zM472 456h8v8h-8z"/><path fill="#355" d="M440 40h8v8h-8zM432 56h8v8h-8zM488 152h8v8h-8zM712 152h8v8h-8zM688 160h8v8h-8zM648 240h8v8h-8zM752 280h8v8h-8zM496 352h8v8h-8zM400 472h8v8h-8z"/><path fill="#238" d="M448 40h8v8h-8zM696 432h8v8h-8zM424 552h8v8h-8z"/><path fill="#122" d="M16 48h8v8h-8zM224 56h8v8h-8zM160 88h16v8h-16zM16 128h8v8h-8zM104 384h8v8h-8zM136 472h8v8h-8zM264 544h8v8h-8zM368 584h8v8h-8z"/><path fill="#224" d="M24 48h8v8h-8zM48 48h56v8h-56zM128 48h16v8h-16zM200 48h8v8h-8zM96 56h16v8h-16zM128 56h8v8h-8zM16 64h8v8h-8zM24 104h8v8h-8z"/><path fill="#358" d="M40 48h8v8h-8z"/><path fill="#456" d="M112 48h8v8h-8zM96 80h8v8h-8zM528 88h8v8h-8zM472 256h8v8h-8zM616 408h8v8h-8z"/><path fill="#344" d="M224 48h8v8h-8zM408 96h8v8h-8zM616 224h8v8h-8zM464 280h8v8h-8zM424 312h8v8h-8zM472 312h8v8h-8zM624 312h8v8h-8zM744 360h8v8h-8zM640 384h8v8h-8zM400 480h8v8h-8zM416 504h8v8h-8z"/><path fill="#334" d="M248 48h16v8h-16zM208 80h8v8h-8zM104 112h8v8h-8zM704 136h8v8h-8zM96 144h8v8h-8zM112 144h8v8h-8zM424 152h8v8h-8zM552 176h8v8h-8zM640 248h8v8h-8zM704 256h8v8h-8zM656 288h16v8h-16zM512 312h8v8h-8zM424 320h8v8h-8zM640 328h8v8h-8zM456 336h8v8h-8zM688 336h8v8h-8zM624 344h8v8h-8z"/><path fill="#187" d="M304 48h8v8h-8zM208 520h8v8h-8zM232 536h8v8h-8z"/><path fill="#142" d="M312 48h8v8h-8zM128 168h8v8h-8zM32 392h8v8h-8zM368 592h8v8h-8z"/><path fill="#1ab" d="M360 48h8v8h-8zM464 144h8v8h-8zM648 376h8v8h-8zM24 408h8v8h-8zM728 416h8v8h-8zM456 456h8v8h-8zM432 504h8v8h-8zM160 552h8v8h-8zM384 584h8v8h-8zM280 592h8v8h-8z"/><path fill="#16c" d="M376 48h8v8h-8zM96 192h8v8h-8zM488 360h8v8h-8zM504 360h8v8h-8zM48 408h8v8h-8zM112 472h8v8h-8zM144 536h8v8h-8zM216 536h8v8h-8zM160 560h8v8h-8zM176 568h8v8h-8z"/><path fill="#426" d="M392 48h8v8h-8zM408 48h8v8h-8zM408 88h8v8h-8zM536 104h8v8h-8zM400 112h8v8h-8zM400 128h8v8h-8zM408 144h8v8h-8zM512 144h8v8h-8zM744 144h8v8h-8zM512 152h8v8h-8zM568 152h8v8h-8zM560 192h8v8h-8zM528 200h8v8h-8zM488 216h8v8h-8zM608 224h8v8h-8zM408 264h8v8h-8zM464 272h8v8h-8zM432 280h8v8h-8zM512 280h8v8h-8zM648 280h8v8h-8zM400 288h8v8h-8zM424 304h8v8h-8zM488 304h8v8h-8zM400 312h8v8h-8zM384 320h8v8h-8zM384 328h8v8h-8zM608 336h8v8h-8zM672 336h8v8h-8zM528 352h8v8h-8zM712 384h8v8h-8z"/><path fill="#516" d="M400 48h8v8h-8zM416 72h8v8h-8zM408 80h8v8h-8zM400 144h8v8h-8zM408 152h8v8h-8zM536 216h8v8h-8zM616 256h8v8h-8zM664 272h8v8h-8zM448 280h8v8h-8zM392 288h8v8h-8zM408 288h8v8h-8zM520 312h8v8h-8zM568 312h8v8h-8zM560 336h8v8h-8zM616 336h8v8h-8zM680 344h8v8h-8zM584 376h8v8h-8zM464 472h8v8h-8z"/><path fill="#566" d="M416 48h8v8h-8zM416 144h8v8h-8zM584 208h8v8h-8zM496 216h8v8h-8zM632 296h8v8h-8z"/><path fill="#287" d="M432 48h8v8h-8zM464 152h8v8h-8zM384 176h8v8h-8zM400 328h8v8h-8zM712 336h8v8h-8zM592 392h8v8h-8zM432 528h8v8h-8z"/><path fill="#18a" d="M440 48h8v8h-8zM440 64h8v8h-8zM656 224h8v8h-8zM480 344h8v8h-8zM616 392h8v8h-8zM480 480h8v8h-8zM272 552h8v8h-8z"/><path fill="#12a" d="M448 48h8v8h-8zM456 72h8v8h-8zM472 72h8v8h-8zM576 120h8v8h-8zM688 136h8v8h-8zM600 144h8v8h-8zM96 160h8v8h-8zM664 160h8v8h-8zM624 168h8v8h-8zM16 176h8v8h-8zM32 176h8v8h-8zM88 176h8v8h-8zM632 176h8v8h-8zM648 176h8v8h-8zM40 184h8v8h-8zM80 184h8v8h-8zM64 192h16v8h-16zM512 392h24v8h-24zM504 400h8v8h-8zM560 400h8v8h-8zM592 408h16v8h-16zM672 408h8v8h-8zM56 416h24v8h-24zM88 432h8v8h-8zM104 456h8v8h-8zM104 480h8v8h-8zM144 512h8v8h-8zM144 528h8v8h-8zM192 560h8v8h-8zM400 560h8v8h-8zM144 568h8v8h-8zM232 568h24v8h-24zM392 568h8v8h-8zM264 576h8v8h-8zM272 608h8v8h-8z"/><path fill="#247" d="M24 56h8v8h-8zM544 72h8v8h-8zM24 96h8v8h-8zM24 136h8v8h-8zM704 432h8v8h-8zM728 432h8v8h-8z"/><path fill="#121" d="M240 56h8v8h-8zM304 56h8v8h-8zM344 56h8v8h-8zM360 56h8v8h-8zM120 128h8v8h-8zM120 176h8v8h-8zM0 200h8v8h-8zM112 200h8v8h-8zM8 208h8v8h-8zM24 208h8v8h-8zM96 344h8v8h-8zM72 360h8v8h-8zM0 400h8v8h-8zM144 472h8v8h-8zM200 512h8v8h-8zM272 544h8v8h-8zM344 552h8v8h-8zM296 584h8v8h-8z"/><path fill="#021" d="M312 56h8v8h-8zM352 56h8v8h-8zM376 128h8v8h-8zM376 136h8v8h-8zM376 240h8v8h-8zM376 472h8v8h-8zM248 536h8v8h-8z"/><path fill="#233" d="M376 56h8v8h-8zM208 64h8v8h-8zM32 96h8v8h-8z"/><path fill="#526" d="M384 56h8v8h-8zM416 56h8v8h-8zM592 176h8v8h-8zM648 312h8v8h-8zM720 392h8v8h-8zM384 504h8v8h-8z"/><path fill="#101" d="M400 56h8v8h-8zM376 64h8v8h-8zM408 64h8v8h-8zM376 72h8v8h-8zM376 80h8v8h-8zM536 96h8v8h-8zM400 152h8v8h-8zM440 160h8v8h-8zM376 168h8v8h-8zM736 184h8v8h-8zM480 208h8v8h-8zM528 208h8v8h-8zM504 224h8v8h-8zM536 224h8v8h-8zM560 232h8v8h-8zM552 240h8v8h-8zM584 240h8v8h-8zM536 248h8v8h-8zM592 248h8v8h-8zM376 256h8v8h-8zM456 264h8v8h-8zM512 264h8v8h-8zM536 264h8v8h-8zM600 264h8v8h-8zM600 272h8v8h-8zM376 280h8v8h-8zM440 280h8v8h-8zM88 288h8v8h-8zM592 288h16v8h-16zM536 296h8v8h-8zM560 296h8v8h-8zM584 296h8v8h-8zM376 304h8v8h-8zM376 320h8v8h-8zM376 328h8v8h-8zM376 336h8v8h-8zM376 344h8v8h-8zM376 520h8v8h-8zM376 528h8v8h-8zM376 536h8v8h-8z"/><path fill="#404" d="M408 56h8v8h-8zM392 80h8v8h-8zM472 208h8v8h-8zM504 232h8v8h-8zM592 240h8v8h-8zM400 272h8v8h-8zM392 280h8v8h-8zM600 280h8v8h-8zM568 304h16v8h-16z"/><path fill="#464" d="M424 56h8v8h-8zM736 152h8v8h-8zM728 160h8v8h-8zM752 184h8v8h-8zM416 200h8v8h-8zM416 256h8v8h-8zM504 304h8v8h-8zM656 312h8v8h-8zM496 344h8v8h-8zM696 384h8v8h-8z"/><path fill="#366" d="M440 56h8v8h-8zM728 136h8v8h-8zM600 160h8v8h-8zM616 192h8v8h-8zM736 216h8v8h-8zM488 352h8v8h-8zM456 408h16v8h-16zM624 416h8v8h-8zM704 424h8v8h-8zM720 424h8v8h-8zM480 488h8v8h-8z"/><path fill="#13a" d="M448 56h8v8h-8zM488 72h8v8h-8zM680 144h8v8h-8zM616 160h8v8h-8zM440 528h8v8h-8z"/><path fill="#217" d="M456 56h8v8h-8zM464 64h8v8h-8zM520 72h16v8h-16zM688 128h8v8h-8zM632 160h8v8h-8zM648 160h8v8h-8zM40 168h24v8h-24zM752 392h8v8h-8zM744 400h8v8h-8zM536 408h24v8h-24zM520 416h8v8h-8zM672 416h8v8h-8zM616 432h8v8h-8zM16 440h16v8h-16zM64 440h8v8h-8zM0 448h8v8h-8zM80 448h8v8h-8zM96 472h8v8h-8zM112 496h8v8h-8zM488 496h8v8h-8zM128 512h8v8h-8zM488 512h8v8h-8zM488 520h8v8h-8zM408 560h8v8h-8zM200 568h16v8h-16zM400 568h8v8h-8zM400 584h8v8h-8z"/><path fill="#312" d="M8 64h8v8h-8zM8 72h8v8h-8z"/><path fill="#36a" d="M24 64h8v8h-8z"/><path fill="#667" d="M112 64h16v8h-16z"/><path fill="#445" d="M216 64h8v8h-8zM424 88h8v8h-8zM536 88h8v8h-8zM520 96h8v8h-8zM520 136h8v8h-8zM752 136h8v8h-8zM384 144h8v8h-8zM504 144h8v8h-8zM112 152h8v8h-8zM560 152h8v8h-8zM520 160h8v8h-8zM720 160h8v8h-8zM520 168h8v8h-8zM432 200h8v8h-8zM560 200h8v8h-8zM632 232h8v8h-8zM720 232h8v8h-8zM760 256h8v8h-8zM440 264h8v8h-8zM736 264h8v8h-8zM640 272h8v8h-8zM680 272h8v8h-8zM512 328h8v8h-8zM624 336h8v8h-8zM664 336h8v8h-8zM552 352h8v8h-8zM640 360h8v8h-8zM696 360h16v8h-16zM632 368h8v8h-8zM752 368h8v8h-8zM704 376h8v8h-8zM648 400h8v8h-8zM632 408h8v8h-8zM480 464h8v8h-8zM456 488h8v8h-8zM400 496h8v8h-8zM448 496h8v8h-8zM384 512h8v8h-8zM392 528h8v8h-8zM416 528h8v8h-8z"/><path fill="#405" d="M384 64h8v8h-8zM416 152h8v8h-8zM424 168h8v8h-8zM560 224h8v8h-8zM512 232h8v8h-8zM600 248h8v8h-8zM496 264h8v8h-8zM448 272h8v8h-8zM704 272h8v8h-8zM616 280h8v8h-8zM656 280h8v8h-8zM520 288h8v8h-8zM592 304h16v8h-16zM544 312h8v8h-8zM584 312h8v8h-8z"/><path fill="#416" d="M416 64h8v8h-8zM528 104h8v8h-8zM512 128h8v8h-8zM448 176h8v8h-8zM520 176h8v8h-8zM488 208h8v8h-8zM552 216h16v8h-16zM544 224h8v8h-8zM592 224h8v8h-8zM496 232h8v8h-8zM600 232h8v8h-8zM712 248h8v8h-8zM760 248h8v8h-8zM472 264h8v8h-8zM704 264h8v8h-8zM440 272h8v8h-8zM696 272h8v8h-8zM384 288h8v8h-8zM392 296h8v8h-8zM504 336h8v8h-8zM664 344h8v8h-8zM704 392h8v8h-8zM416 488h8v8h-8zM408 496h8v8h-8z"/><path fill="#465" d="M424 64h8v8h-8zM424 72h8v8h-8zM416 88h8v8h-8zM520 104h8v8h-8zM392 120h8v8h-8zM408 136h8v8h-8zM600 168h8v8h-8zM448 192h8v8h-8zM416 208h8v8h-8zM688 288h8v8h-8zM392 320h8v8h-8zM600 328h8v8h-8zM712 344h8v8h-8zM616 352h8v8h-8zM400 488h8v8h-8z"/><path fill="#295" d="M432 64h8v8h-8zM0 192h8v8h-8zM640 216h8v8h-8zM520 344h8v8h-8zM504 352h8v8h-8zM64 376h8v8h-8zM472 496h8v8h-8z"/><path fill="#12b" d="M448 64h8v8h-8zM560 112h8v8h-8zM8 176h8v8h-8zM656 176h8v8h-8zM88 184h8v8h-8zM640 184h16v8h-16zM48 192h16v8h-16zM80 192h8v8h-8zM512 384h16v8h-16zM496 392h16v8h-16zM536 392h24v8h-24zM496 400h8v8h-8zM64 408h16v8h-16zM496 408h8v8h-8zM680 408h8v8h-8zM40 416h16v8h-16zM80 416h8v8h-8zM496 416h8v8h-8zM88 424h8v8h-8zM496 424h8v8h-8zM0 432h8v8h-8zM488 480h8v8h-8zM144 504h8v8h-8zM480 504h8v8h-8zM144 552h8v8h-8zM200 552h24v8h-24zM256 568h8v8h-8zM272 600h8v8h-8z"/><path fill="#228" d="M496 64h8v8h-8zM560 88h8v8h-8zM504 472h8v8h-8zM384 608h8v8h-8z"/><path fill="#306" d="M544 64h8v8h-8zM568 96h8v8h-8zM584 112h8v8h-8zM600 120h8v8h-8zM608 128h8v8h-8zM616 136h8v8h-8zM672 136h8v8h-8zM632 144h8v8h-8zM656 144h8v8h-8zM744 408h8v8h-8zM536 424h16v8h-16zM592 424h8v8h-8zM664 424h16v8h-16zM528 432h8v8h-8zM632 432h8v8h-8zM688 432h8v8h-8zM520 440h8v8h-8zM8 456h48v8h-48zM64 464h8v8h-8zM512 464h8v8h-8zM72 472h8v8h-8zM504 480h8v8h-8zM88 488h8v8h-8zM96 496h8v8h-8zM104 504h8v8h-8zM112 512h8v8h-8zM120 528h8v8h-8zM488 528h8v8h-8zM472 536h8v8h-8zM440 544h8v8h-8zM128 552h8v8h-8zM408 568h8v8h-8zM152 576h16v8h-16zM208 584h16v8h-16zM232 592h8v8h-8zM240 600h8v8h-8zM400 600h8v8h-8z"/><path fill="#316" d="M552 64h8v8h-8z"/><path fill="#386" d="M432 72h8v8h-8zM760 120h8v8h-8zM672 360h8v8h-8zM728 400h8v8h-8z"/><path fill="#269" d="M440 72h8v8h-8zM680 192h8v8h-8zM512 368h8v8h-8zM584 400h8v8h-8zM600 400h8v8h-8zM688 408h8v8h-8zM384 600h8v8h-8z"/><path fill="#12c" d="M448 72h8v8h-8zM456 80h8v8h-8zM96 176h8v8h-8zM656 184h8v8h-8zM88 192h8v8h-8zM64 200h24v8h-24zM496 384h16v8h-16zM528 384h8v8h-8zM488 400h8v8h-8zM56 408h8v8h-8zM80 408h8v8h-8zM88 416h8v8h-8zM96 432h8v8h-8zM104 448h8v8h-8zM112 464h8v8h-8zM264 568h8v8h-8zM272 576h8v8h-8zM272 584h8v8h-8z"/><path fill="#119" d="M464 72h8v8h-8zM88 168h8v8h-8zM656 168h8v8h-8zM48 184h8v8h-8zM72 184h8v8h-8zM512 400h8v8h-8zM504 408h8v8h-8zM24 432h8v8h-8zM104 464h8v8h-8zM104 472h8v8h-8zM136 504h8v8h-8zM216 560h8v8h-8z"/><path fill="#239" d="M480 72h8v8h-8zM728 128h8v8h-8zM656 416h8v8h-8zM632 424h8v8h-8z"/><path fill="#267" d="M496 72h8v8h-8zM560 120h8v8h-8zM592 400h8v8h-8zM472 504h8v8h-8zM464 528h8v8h-8z"/><path fill="#248" d="M536 72h8v8h-8zM760 112h8v8h-8zM568 120h8v8h-8zM744 392h8v8h-8zM736 416h8v8h-8zM736 424h8v8h-8z"/><path fill="#257" d="M552 72h8v8h-8zM696 128h8v8h-8zM624 184h8v8h-8zM520 368h8v8h-8zM576 400h8v8h-8zM728 440h8v8h-8zM496 472h8v8h-8zM480 528h8v8h-8zM392 584h8v8h-8zM392 600h8v8h-8z"/><path fill="#313" d="M8 80h8v8h-8zM8 88h8v8h-8zM8 96h8v8h-8zM8 104h8v8h-8zM8 112h8v8h-8zM432 184h8v8h-8zM520 200h8v8h-8zM704 344h8v8h-8zM760 368h8v8h-8z"/><path fill="#37c" d="M24 80h8v8h-8z"/><path fill="#567" d="M104 80h16v8h-16zM440 184h8v8h-8zM592 208h8v8h-8zM632 264h8v8h-8zM616 312h8v8h-8z"/><path fill="#678" d="M120 80h8v8h-8zM512 304h8v8h-8z"/><path fill="#517" d="M384 80h8v8h-8zM432 160h8v8h-8zM432 168h8v8h-8zM752 192h8v8h-8zM472 200h8v8h-8zM552 208h8v8h-8zM480 216h8v8h-8zM528 216h8v8h-8zM600 240h8v8h-8zM728 248h8v8h-8zM400 256h8v8h-8zM448 264h8v8h-8zM456 272h8v8h-8zM520 280h8v8h-8zM504 296h8v8h-8zM688 344h8v8h-8zM632 376h8v8h-8zM424 488h8v8h-8z"/><path fill="#537" d="M416 80h8v8h-8zM552 192h8v8h-8zM520 216h8v8h-8zM416 272h8v8h-8zM432 272h8v8h-8zM712 272h8v8h-8zM528 312h8v8h-8zM384 336h8v8h-8zM680 352h8v8h-8z"/><path fill="#373" d="M424 80h8v8h-8zM544 184h8v8h-8zM424 208h8v8h-8z"/><path fill="#15a" d="M440 80h8v8h-8zM552 104h8v8h-8zM584 128h8v8h-8zM592 144h8v8h-8zM488 424h8v8h-8zM616 424h8v8h-8zM712 432h8v8h-8zM448 520h8v8h-8z"/><path fill="#13d" d="M448 80h8v8h-8zM552 112h8v8h-8zM96 184h8v8h-8zM632 184h8v8h-8zM664 184h8v8h-8zM640 192h8v8h-8zM656 192h16v8h-16zM88 200h8v8h-8zM648 200h16v8h-16zM64 208h8v8h-8zM80 208h16v8h-16zM80 216h8v8h-8zM496 368h8v8h-8zM480 376h32v8h-32zM520 376h8v8h-8zM472 384h16v8h-16zM72 392h16v8h-16zM472 392h16v8h-16zM56 400h8v8h-8zM88 400h8v8h-8zM480 400h8v8h-8zM680 400h8v8h-8zM152 528h8v8h-8zM208 544h16v8h-16zM184 552h8v8h-8zM256 560h8v8h-8zM280 568h8v8h-8zM384 568h8v8h-8zM280 608h8v8h-8z"/><path fill="#14b" d="M464 80h8v8h-8zM528 80h8v8h-8zM616 168h8v8h-8zM664 168h8v8h-8zM608 408h8v8h-8zM184 568h8v8h-8z"/><path fill="#375" d="M488 80h8v8h-8zM544 88h8v8h-8zM744 136h8v8h-8zM112 168h8v8h-8zM392 168h8v8h-8zM616 184h8v8h-8zM104 192h8v8h-8zM408 216h8v8h-8zM712 232h8v8h-8zM696 248h8v8h-8zM704 296h8v8h-8zM760 360h8v8h-8zM688 368h8v8h-8zM624 384h8v8h-8zM704 416h8v8h-8zM384 448h8v8h-8zM488 456h8v8h-8zM128 472h8v8h-8zM464 520h8v8h-8zM416 536h8v8h-8zM264 552h8v8h-8z"/><path fill="#16a" d="M504 80h8v8h-8zM552 80h8v8h-8zM672 392h8v8h-8zM696 424h8v8h-8z"/><path fill="#18c" d="M536 80h8v8h-8zM688 192h8v8h-8zM48 200h8v8h-8zM64 384h8v8h-8zM568 384h8v8h-8zM56 392h8v8h-8zM112 424h8v8h-8zM128 456h8v8h-8zM168 504h8v8h-8zM280 600h8v8h-8zM288 608h8v8h-8z"/><path fill="#415" d="M384 88h8v8h-8zM392 144h8v8h-8zM528 152h8v8h-8zM760 152h8v8h-8zM512 168h8v8h-8zM744 184h8v8h-8zM424 200h8v8h-8zM464 200h8v8h-8zM576 216h8v8h-8zM728 240h8v8h-8zM648 248h8v8h-8zM752 248h8v8h-8zM464 256h8v8h-8zM496 256h8v8h-8zM480 304h8v8h-8zM480 312h8v8h-8zM576 312h8v8h-8zM560 320h8v8h-8zM584 320h8v8h-8zM536 336h8v8h-8zM584 336h8v8h-8zM528 344h8v8h-8zM560 344h8v8h-8zM584 352h8v8h-8zM688 352h16v8h-16zM584 368h8v8h-8zM424 480h8v8h-8zM416 496h8v8h-8z"/><path fill="#527" d="M392 88h8v8h-8zM744 152h8v8h-8zM456 168h8v8h-8zM432 176h8v8h-8zM520 192h16v8h-16zM744 192h8v8h-8zM752 200h8v8h-8zM616 248h8v8h-8zM720 256h8v8h-8zM408 272h8v8h-8zM496 272h8v8h-8zM624 272h8v8h-8zM504 288h8v8h-8zM640 312h8v8h-8zM696 344h8v8h-8z"/><path fill="#528" d="M400 88h8v8h-8zM440 176h8v8h-8zM472 216h8v8h-8zM632 272h8v8h-8zM624 296h8v8h-8z"/><path fill="#05e" d="M440 88h8v8h-8zM648 208h8v8h-8zM672 208h8v8h-8zM72 224h8v8h-8zM88 224h8v8h-8zM752 304h8v8h-8zM464 360h8v8h-8zM448 368h8v8h-8zM448 376h8v8h-8zM72 384h8v8h-8zM448 384h8v8h-8zM680 392h8v8h-8zM224 544h8v8h-8zM280 560h8v8h-8z"/><path fill="#14d" d="M448 88h16v8h-16zM8 184h16v8h-16zM632 192h8v8h-8zM72 216h8v8h-8zM488 368h8v8h-8zM472 376h8v8h-8zM528 376h8v8h-8zM40 408h8v8h-8zM32 416h8v8h-8zM152 496h8v8h-8zM440 520h8v8h-8zM184 560h8v8h-8zM248 560h8v8h-8zM272 560h8v8h-8zM280 576h8v8h-8zM280 584h8v8h-8z"/><path fill="#198" d="M480 88h8v8h-8zM576 160h8v8h-8zM400 184h8v8h-8zM696 328h8v8h-8zM680 360h8v8h-8z"/><path fill="#296" d="M488 88h8v8h-8zM688 184h8v8h-8zM728 192h8v8h-8zM736 208h8v8h-8zM416 232h8v8h-8zM392 240h8v8h-8zM744 368h8v8h-8zM56 384h8v8h-8zM640 408h8v8h-8zM168 536h8v8h-8zM240 552h8v8h-8z"/><path fill="#475" d="M496 88h8v8h-8zM504 160h8v8h-8zM760 160h8v8h-8zM416 184h8v8h-8zM608 216h8v8h-8zM704 248h8v8h-8zM424 296h8v8h-8z"/><path fill="#299" d="M504 88h8v8h-8zM696 320h8v8h-8zM144 480h8v8h-8z"/><path fill="#377" d="M552 88h8v8h-8zM384 432h8v8h-8z"/><path fill="#656" d="M40 96h8v8h-8z"/><path fill="#666" d="M64 96h8v8h-8z"/><path fill="#556" d="M80 96h8v8h-8zM504 136h8v8h-8zM600 216h8v8h-8zM496 240h8v8h-8zM632 288h8v8h-8zM536 320h8v8h-8z"/><path fill="#545" d="M88 96h8v8h-8z"/><path fill="#434" d="M120 96h8v8h-8zM48 112h8v8h-8zM96 112h8v8h-8zM424 144h8v8h-8zM624 232h8v8h-8z"/><path fill="#575" d="M384 96h8v8h-8zM472 232h8v8h-8zM384 520h8v8h-8z"/><path fill="#547" d="M400 96h8v8h-8zM488 272h8v8h-8zM544 328h8v8h-8zM568 328h8v8h-8z"/><path fill="#2c4" d="M424 96h8v8h-8zM528 120h8v8h-8zM424 232h8v8h-8zM672 248h8v8h-8zM464 304h8v8h-8z"/><path fill="#06e" d="M440 96h8v8h-8zM456 96h8v8h-8zM16 192h8v8h-8zM456 352h8v8h-8zM496 360h8v8h-8zM120 448h8v8h-8zM160 528h8v8h-8z"/><path fill="#04e" d="M448 96h8v8h-8zM672 200h8v8h-8zM656 208h16v8h-16zM80 224h8v8h-8zM760 304h8v8h-8zM760 312h8v8h-8zM472 360h16v8h-16zM456 368h16v8h-16zM456 376h8v8h-8zM88 384h8v8h-8zM456 384h8v8h-8zM456 392h8v8h-8zM208 536h8v8h-8zM376 568h8v8h-8z"/><path fill="#2a5" d="M464 96h8v8h-8zM424 120h8v8h-8zM648 352h8v8h-8zM384 440h8v8h-8z"/><path fill="#1b9" d="M472 96h8v8h-8zM728 176h8v8h-8zM760 336h8v8h-8zM88 344h8v8h-8zM664 392h8v8h-8zM120 472h8v8h-8zM416 472h8v8h-8zM440 472h8v8h-8z"/><path fill="#0bd" d="M480 96h8v8h-8zM488 136h8v8h-8zM480 144h8v8h-8zM544 144h8v8h-8zM584 160h8v8h-8zM696 168h8v8h-8zM720 176h8v8h-8zM400 232h8v8h-8zM88 352h8v8h-8zM600 384h8v8h-8zM656 392h8v8h-8zM456 448h8v8h-8zM392 456h8v8h-8zM440 464h8v8h-8z"/><path fill="#1aa" d="M488 96h8v8h-8zM552 128h8v8h-8zM488 144h8v8h-8zM480 152h8v8h-8zM712 168h8v8h-8zM0 184h8v8h-8zM760 184h8v8h-8zM400 200h8v8h-8zM400 208h8v8h-8zM720 224h8v8h-8zM672 240h8v8h-8zM704 240h8v8h-8zM720 280h8v8h-8zM488 448h8v8h-8zM424 504h8v8h-8zM432 520h8v8h-8zM176 544h8v8h-8zM408 544h8v8h-8zM288 576h8v8h-8zM288 584h8v8h-8zM376 592h8v8h-8z"/><path fill="#455" d="M544 96h8v8h-8zM392 104h16v8h-16zM424 128h8v8h-8zM520 128h8v8h-8zM392 136h8v8h-8zM576 136h8v8h-8zM696 144h8v8h-8zM552 160h8v8h-8zM752 160h8v8h-8zM744 176h8v8h-8zM504 192h8v8h-8zM576 192h8v8h-8zM608 192h8v8h-8zM752 208h8v8h-8zM632 224h8v8h-8zM384 248h8v8h-8zM632 248h8v8h-8zM416 264h8v8h-8zM648 272h8v8h-8zM712 288h8v8h-8zM400 304h8v8h-8zM640 304h16v8h-16zM432 320h8v8h-8zM688 320h8v8h-8zM616 360h8v8h-8zM720 384h8v8h-8zM632 400h8v8h-8zM696 400h8v8h-8zM480 432h8v8h-8zM416 480h8v8h-8zM384 544h8v8h-8z"/><path fill="#4a3" d="M384 104h8v8h-8zM488 288h8v8h-8zM648 288h8v8h-8zM648 296h8v8h-8z"/><path fill="#3b3" d="M408 104h8v8h-8zM608 208h8v8h-8zM456 216h8v8h-8zM752 216h8v8h-8zM496 320h8v8h-8zM632 328h8v8h-8zM632 352h8v8h-8z"/><path fill="#424" d="M416 104h8v8h-8z"/><path fill="#06f" d="M440 104h24v8h-24zM544 120h8v8h-8zM680 200h16v8h-16zM688 208h8v8h-8zM680 216h16v8h-16zM80 232h16v8h-16zM744 296h16v8h-16zM736 304h16v8h-16zM744 312h8v8h-8zM432 352h24v8h-24zM464 352h8v8h-8zM480 352h8v8h-8zM424 360h24v8h-24zM416 368h24v8h-24zM88 376h8v8h-8zM416 376h16v8h-16zM416 384h24v8h-24zM416 392h24v8h-24zM424 400h40v8h-40zM288 560h8v8h-8z"/><path fill="#09d" d="M472 104h8v8h-8zM584 152h8v8h-8zM720 192h8v8h-8zM728 280h8v8h-8zM432 328h16v8h-16zM672 368h8v8h-8zM744 376h8v8h-8zM40 400h8v8h-8zM288 600h8v8h-8z"/><path fill="#0ae" d="M480 104h8v8h-8zM432 120h8v8h-8zM480 136h8v8h-8zM696 176h8v8h-8zM712 176h8v8h-8zM384 184h8v8h-8zM392 192h8v8h-8zM392 224h8v8h-8zM704 320h8v8h-8zM744 336h8v8h-8zM728 344h8v8h-8zM664 368h8v8h-8zM608 384h8v8h-8zM656 384h8v8h-8zM448 440h8v8h-8zM408 456h8v8h-8zM424 456h16v8h-16z"/><path fill="#0bb" d="M496 104h8v8h-8zM392 176h8v8h-8zM696 312h8v8h-8zM752 344h8v8h-8zM720 352h8v8h-8zM648 384h8v8h-8zM648 392h8v8h-8zM472 480h8v8h-8zM416 512h8v8h-8zM416 520h8v8h-8z"/><path fill="#384" d="M504 104h8v8h-8zM536 112h8v8h-8zM448 144h8v8h-8zM704 152h8v8h-8zM736 160h8v8h-8zM408 176h8v8h-8zM528 176h8v8h-8zM752 176h8v8h-8zM464 248h8v8h-8zM680 248h8v8h-8zM424 256h8v8h-8zM408 312h8v8h-8zM688 312h8v8h-8zM440 320h8v8h-8zM488 320h8v8h-8zM752 360h8v8h-8zM392 472h8v8h-8zM408 480h8v8h-8zM392 544h8v8h-8z"/><path fill="#3a3" d="M512 104h8v8h-8zM384 112h8v8h-8zM552 168h8v8h-8zM464 184h8v8h-8zM536 184h8v8h-8zM568 184h8v8h-8zM488 192h8v8h-8zM600 192h8v8h-8zM440 200h8v8h-8zM592 200h8v8h-8zM744 216h8v8h-8zM680 264h8v8h-8zM432 288h8v8h-8zM480 296h8v8h-8zM656 304h8v8h-8zM664 312h8v8h-8zM688 328h8v8h-8zM720 360h8v8h-8zM728 376h8v8h-8zM464 488h8v8h-8zM384 496h8v8h-8zM400 520h8v8h-8z"/><path fill="#246" d="M24 112h8v8h-8z"/><path fill="#020" d="M376 112h8v8h-8zM376 120h8v8h-8zM376 480h8v8h-8zM376 488h8v8h-8z"/><path fill="#202" d="M392 112h8v8h-8zM392 160h8v8h-8zM448 168h8v8h-8zM480 200h8v8h-8zM456 208h8v8h-8zM544 248h8v8h-8zM720 248h8v8h-8zM488 264h8v8h-8zM640 280h8v8h-8zM496 296h8v8h-8zM552 296h8v8h-8zM392 304h8v8h-8zM528 304h8v8h-8zM624 304h8v8h-8zM584 328h8v8h-8zM672 352h8v8h-8z"/><path fill="#2c3" d="M408 112h8v8h-8zM512 112h8v8h-8zM576 176h8v8h-8zM504 184h8v8h-8zM416 192h8v8h-8zM592 192h8v8h-8zM464 240h8v8h-8zM656 256h8v8h-8zM432 304h8v8h-8zM680 304h8v8h-8zM632 344h8v8h-8z"/><path fill="#1e4" d="M416 112h8v8h-8zM384 128h8v8h-8zM472 176h8v8h-8zM448 296h8v8h-8zM648 344h8v8h-8z"/><path fill="#2a6" d="M424 112h8v8h-8zM736 224h8v8h-8zM688 304h8v8h-8zM496 336h8v8h-8zM640 368h8v8h-8z"/><path fill="#07f" d="M448 112h16v8h-16zM448 120h16v8h-16zM696 200h8v8h-8zM696 208h16v8h-16zM696 216h8v8h-8zM680 224h24v8h-24zM736 296h8v8h-8zM728 304h8v8h-8zM728 312h16v8h-16zM736 320h8v8h-8zM424 344h24v8h-24zM416 352h16v8h-16zM416 360h8v8h-8zM88 368h8v8h-8zM408 368h8v8h-8zM400 376h16v8h-16zM400 384h16v8h-16zM672 384h16v8h-16zM400 392h16v8h-16zM400 400h24v8h-24zM400 408h48v8h-48zM408 416h32v8h-32zM368 560h8v8h-8z"/><path fill="#08f" d="M464 112h8v8h-8zM440 120h8v8h-8zM464 120h8v8h-8zM696 192h16v8h-16zM704 200h16v8h-16zM712 208h8v8h-8zM704 216h8v8h-8zM680 232h16v8h-16zM88 240h8v8h-8zM736 288h8v8h-8zM728 296h8v8h-8zM720 304h8v8h-8zM720 312h8v8h-8zM720 320h16v8h-16zM728 328h16v8h-16zM424 336h24v8h-24zM416 344h8v8h-8zM408 352h8v8h-8zM408 360h8v8h-8zM400 368h8v8h-8zM392 376h8v8h-8zM672 376h8v8h-8zM384 384h16v8h-16zM384 392h16v8h-16zM384 400h16v8h-16zM384 408h16v8h-16zM392 416h16v8h-16zM440 416h8v8h-8zM400 424h40v8h-40zM408 432h24v8h-24zM432 512h8v8h-8z"/><path fill="#0bc" d="M496 112h8v8h-8zM560 136h8v8h-8zM552 144h8v8h-8zM472 152h8v8h-8zM688 168h8v8h-8zM688 176h8v8h-8zM400 192h8v8h-8zM728 224h8v8h-8zM88 256h8v8h-8zM696 304h8v8h-8zM752 336h8v8h-8zM728 352h8v8h-8zM656 360h8v8h-8zM648 368h8v8h-8zM568 376h8v8h-8zM600 376h8v8h-8zM456 432h16v8h-16zM464 440h8v8h-8zM464 448h8v8h-8zM392 464h16v8h-16zM448 464h8v8h-8z"/><path fill="#1b7" d="M504 112h8v8h-8zM88 264h8v8h-8zM760 328h8v8h-8zM608 368h8v8h-8z"/><path fill="#364" d="M528 112h8v8h-8zM568 144h8v8h-8zM680 160h8v8h-8zM464 176h8v8h-8zM584 176h8v8h-8zM744 208h8v8h-8zM760 240h8v8h-8zM448 248h8v8h-8zM656 248h8v8h-8zM672 264h8v8h-8zM680 320h8v8h-8zM392 328h8v8h-8zM472 328h8v8h-8zM504 344h8v8h-8zM728 384h8v8h-8zM584 392h8v8h-8zM632 392h8v8h-8zM456 480h8v8h-8z"/><path fill="#17a" d="M544 112h8v8h-8z"/><path fill="#227" d="M752 112h8v8h-8zM624 432h8v8h-8z"/><path fill="#1d3" d="M384 120h8v8h-8zM432 256h8v8h-8zM608 360h8v8h-8z"/><path fill="#383" d="M408 120h8v8h-8zM496 160h8v8h-8zM528 328h8v8h-8zM392 512h8v8h-8z"/><path fill="#1f3" d="M416 120h8v8h-8zM488 176h8v8h-8zM472 184h16v8h-16zM432 224h24v8h-24zM448 232h8v8h-8zM752 232h8v8h-8zM448 240h8v8h-8zM672 256h8v8h-8zM464 296h8v8h-8zM672 296h8v8h-8zM440 304h8v8h-8zM672 304h8v8h-8zM440 312h8v8h-8z"/><path fill="#435" d="M512 120h8v8h-8zM416 136h8v8h-8zM760 136h8v8h-8zM704 144h8v8h-8zM504 152h8v8h-8zM560 160h8v8h-8zM568 168h8v8h-8zM560 176h8v8h-8zM464 192h8v8h-8zM608 200h8v8h-8zM408 208h8v8h-8zM624 208h8v8h-8zM760 208h8v8h-8zM464 216h8v8h-8zM616 216h8v8h-8zM608 232h8v8h-8zM712 240h8v8h-8zM456 248h8v8h-8zM408 256h8v8h-8zM688 256h8v8h-8zM672 280h8v8h-8zM712 280h8v8h-8zM480 320h8v8h-8zM576 328h8v8h-8zM656 328h16v8h-16zM592 344h8v8h-8zM624 360h16v8h-16zM736 360h8v8h-8zM544 376h8v8h-8zM624 400h8v8h-8zM432 472h8v8h-8zM432 488h8v8h-8zM448 504h8v8h-8zM384 528h8v8h-8z"/><path fill="#27a" d="M536 120h8v8h-8zM752 288h8v8h-8z"/><path fill="#179" d="M552 120h8v8h-8zM592 152h8v8h-8zM672 160h8v8h-8zM496 464h8v8h-8z"/><path fill="#393" d="M392 128h8v8h-8zM544 160h8v8h-8zM504 168h8v8h-8zM728 168h8v8h-8zM616 208h8v8h-8zM656 232h8v8h-8zM448 288h8v8h-8zM432 312h8v8h-8zM656 336h8v8h-8zM568 344h8v8h-8z"/><path fill="#493" d="M408 128h8v8h-8zM496 208h8v8h-8zM640 240h8v8h-8z"/><path fill="#1ba" d="M560 128h8v8h-8zM608 184h8v8h-8zM8 200h8v8h-8zM56 216h8v8h-8zM536 368h8v8h-8zM160 544h8v8h-8zM168 552h8v8h-8z"/><path fill="#229" d="M736 128h8v8h-8zM672 144h8v8h-8zM568 408h8v8h-8zM136 560h8v8h-8z"/><path fill="#13b" d="M744 128h8v8h-8zM24 176h8v8h-8zM96 440h8v8h-8zM496 448h8v8h-8zM496 456h8v8h-8zM112 488h8v8h-8zM128 496h8v8h-8zM392 560h8v8h-8z"/><path fill="#2a4" d="M384 136h8v8h-8zM480 328h8v8h-8zM656 344h8v8h-8zM456 424h8v8h-8z"/><path fill="#2b3" d="M424 136h8v8h-8zM752 168h8v8h-8zM472 192h8v8h-8zM744 272h8v8h-8zM680 288h8v8h-8zM432 296h8v8h-8zM416 312h8v8h-8zM672 320h8v8h-8zM712 368h16v8h-16zM696 376h8v8h-8z"/><path fill="#19a" d="M432 136h8v8h-8zM448 136h8v8h-8zM104 200h8v8h-8zM712 224h8v8h-8zM400 344h8v8h-8zM104 440h8v8h-8zM136 480h8v8h-8zM128 488h8v8h-8zM240 560h8v8h-8zM376 584h8v8h-8z"/><path fill="#09c" d="M456 136h8v8h-8zM536 136h8v8h-8zM24 184h8v8h-8zM680 240h8v8h-8z"/><path fill="#618" d="M512 136h8v8h-8zM584 224h8v8h-8zM592 232h8v8h-8zM616 264h8v8h-8zM384 296h8v8h-8z"/><path fill="#385" d="M568 136h8v8h-8zM464 160h8v8h-8zM728 232h8v8h-8zM384 240h8v8h-8zM664 240h8v8h-8zM696 336h8v8h-8zM536 352h8v8h-8zM424 472h8v8h-8z"/><path fill="#129" d="M600 136h8v8h-8zM576 408h8v8h-8zM416 552h8v8h-8z"/><path fill="#15b" d="M712 136h8v8h-8zM616 176h8v8h-8zM640 200h8v8h-8zM488 416h8v8h-8z"/><path fill="#276" d="M736 136h8v8h-8zM592 168h8v8h-8zM456 344h8v8h-8zM528 368h8v8h-8zM600 368h8v8h-8zM592 376h8v8h-8zM616 376h8v8h-8zM616 400h8v8h-8zM616 416h8v8h-8zM696 416h8v8h-8zM728 424h8v8h-8zM488 432h8v8h-8zM120 440h8v8h-8zM168 512h8v8h-8zM296 568h8v8h-8z"/><path fill="#315" d="M8 144h8v8h-8zM512 256h8v8h-8zM560 312h8v8h-8zM552 360h8v8h-8zM728 448h8v8h-8zM456 512h8v8h-8z"/><path fill="#323" d="M56 144h8v8h-8zM528 144h8v8h-8zM760 192h8v8h-8zM496 288h8v8h-8zM408 296h8v8h-8zM608 344h8v8h-8zM488 464h8v8h-8z"/><path fill="#011" d="M376 144h8v8h-8zM376 152h8v8h-8zM136 160h8v8h-8zM376 160h8v8h-8zM376 176h8v8h-8zM0 208h8v8h-8zM96 336h8v8h-8zM80 344h8v8h-8zM376 360h8v8h-8zM376 368h8v8h-8zM56 376h8v8h-8zM104 376h8v8h-8zM112 400h8v8h-8zM112 408h8v8h-8zM376 464h8v8h-8zM184 496h8v8h-8zM376 496h8v8h-8zM352 560h8v8h-8z"/><path fill="#395" d="M432 144h8v8h-8zM480 160h8v8h-8zM576 384h8v8h-8z"/><path fill="#1a9" d="M440 144h8v8h-8zM112 160h8v8h-8zM48 208h8v8h-8zM64 224h8v8h-8zM400 240h8v8h-8zM736 352h16v8h-16zM432 464h8v8h-8zM424 528h8v8h-8z"/><path fill="#285" d="M456 144h8v8h-8zM688 248h8v8h-8zM48 392h8v8h-8z"/><path fill="#294" d="M496 144h8v8h-8zM728 272h8v8h-8zM496 328h8v8h-8zM440 480h8v8h-8z"/><path fill="#298" d="M536 144h8v8h-8zM712 144h8v8h-8zM576 152h8v8h-8zM696 160h8v8h-8zM680 168h8v8h-8zM408 224h8v8h-8zM720 288h8v8h-8zM736 376h8v8h-8zM464 456h8v8h-8z"/><path fill="#001" d="M752 144h8v8h-8zM376 352h8v8h-8zM376 432h8v8h-8zM176 528h8v8h-8z"/><path fill="#203" d="M760 144h8v8h-8zM520 184h8v8h-8zM576 208h8v8h-8zM496 224h8v8h-8zM392 256h8v8h-8zM400 264h8v8h-8zM608 296h8v8h-8zM600 312h8v8h-8zM672 344h8v8h-8zM704 352h8v8h-8zM432 480h8v8h-8zM456 504h8v8h-8z"/><path fill="#436" d="M432 152h8v8h-8zM456 152h8v8h-8zM512 184h8v8h-8zM456 192h8v8h-8zM512 224h8v8h-8zM744 248h8v8h-8zM656 272h8v8h-8zM688 272h8v8h-8zM464 328h8v8h-8zM760 352h8v8h-8zM624 376h8v8h-8zM704 384h8v8h-8zM464 496h8v8h-8zM384 536h8v8h-8z"/><path fill="#1b8" d="M536 152h8v8h-8zM704 336h8v8h-8zM656 352h8v8h-8zM472 424h8v8h-8zM456 464h8v8h-8z"/><path fill="#0ba" d="M544 152h8v8h-8zM592 160h8v8h-8zM600 392h8v8h-8z"/><path fill="#14a" d="M600 152h8v8h-8zM480 496h8v8h-8z"/><path fill="#11a" d="M608 152h8v8h-8zM0 168h8v8h-8zM640 176h8v8h-8zM40 424h8v8h-8zM80 424h8v8h-8zM8 432h8v8h-8zM96 448h8v8h-8zM144 520h8v8h-8zM448 528h8v8h-8zM264 584h8v8h-8z"/><path fill="#394" d="M728 152h8v8h-8zM384 168h8v8h-8zM480 192h8v8h-8zM448 216h8v8h-8zM408 248h8v8h-8zM576 360h8v8h-8zM624 392h8v8h-8zM400 504h8v8h-8z"/><path fill="#14c" d="M104 160h8v8h-8zM0 176h8v8h-8zM664 176h8v8h-8zM32 184h8v8h-8zM496 432h8v8h-8zM120 488h8v8h-8zM152 512h8v8h-8zM144 544h8v8h-8zM272 592h8v8h-8z"/><path fill="#18d" d="M120 160h8v8h-8zM704 224h8v8h-8zM448 344h8v8h-8z"/><path fill="#177" d="M128 160h8v8h-8zM96 232h8v8h-8zM368 552h8v8h-8z"/><path fill="#629" d="M408 160h8v8h-8zM528 232h8v8h-8zM616 288h8v8h-8zM592 312h8v8h-8zM608 312h8v8h-8z"/><path fill="#72a" d="M416 160h16v8h-16zM528 296h8v8h-8zM536 304h8v8h-8z"/><path fill="#0cb" d="M472 160h8v8h-8zM584 168h8v8h-8zM408 232h8v8h-8zM408 240h8v8h-8zM384 464h8v8h-8z"/><path fill="#2c2" d="M488 160h8v8h-8zM656 296h8v8h-8zM576 352h8v8h-8zM392 488h8v8h-8z"/><path fill="#1d5" d="M536 160h8v8h-8zM464 312h8v8h-8z"/><path fill="#13c" d="M96 168h8v8h-8zM624 176h8v8h-8zM40 192h8v8h-8zM648 192h8v8h-8zM56 200h8v8h-8zM72 208h8v8h-8zM512 376h8v8h-8zM488 384h8v8h-8zM488 392h8v8h-8zM560 392h8v8h-8zM64 400h24v8h-24zM88 408h8v8h-8zM488 408h8v8h-8zM8 424h16v8h-16zM32 424h8v8h-8zM96 424h8v8h-8zM112 456h8v8h-8zM136 496h16v8h-16zM152 504h8v8h-8zM152 520h8v8h-8zM192 552h8v8h-8zM224 560h8v8h-8zM272 568h8v8h-8z"/><path fill="#546" d="M400 168h16v8h-16zM520 208h8v8h-8zM392 248h8v8h-8zM696 264h8v8h-8zM520 304h8v8h-8zM584 360h8v8h-8z"/><path fill="#0e7" d="M472 168h8v8h-8zM424 240h8v8h-8z"/><path fill="#1f2" d="M488 168h16v8h-16zM536 168h16v8h-16zM496 176h8v8h-8zM488 184h16v8h-16zM432 208h8v8h-8zM424 216h24v8h-24zM456 224h8v8h-8zM456 232h8v8h-8zM456 240h8v8h-8zM664 304h8v8h-8zM672 312h16v8h-16zM640 336h16v8h-16zM640 344h8v8h-8zM384 488h8v8h-8zM400 512h8v8h-8z"/><path fill="#2d2" d="M528 168h8v8h-8zM536 176h8v8h-8zM576 184h8v8h-8zM760 232h8v8h-8zM472 296h8v8h-8zM600 360h8v8h-8z"/><path fill="#1e3" d="M736 168h8v8h-8zM744 224h16v8h-16zM440 248h8v8h-8zM440 256h8v8h-8zM744 264h8v8h-8zM456 288h8v8h-8zM672 288h8v8h-8zM440 296h8v8h-8zM384 480h8v8h-8z"/><path fill="#15d" d="M104 176h8v8h-8zM64 392h8v8h-8zM96 408h8v8h-8zM104 424h8v8h-8zM168 560h8v8h-8z"/><path fill="#557" d="M424 176h8v8h-8zM472 272h8v8h-8z"/><path fill="#1f4" d="M480 176h8v8h-8zM440 232h8v8h-8zM440 240h8v8h-8zM664 256h8v8h-8zM752 264h8v8h-8zM456 296h8v8h-8z"/><path fill="#2e2" d="M544 176h8v8h-8zM496 192h8v8h-8zM440 208h8v8h-8zM632 336h8v8h-8zM544 344h8v8h-8zM568 352h8v8h-8zM600 352h16v8h-16zM640 352h8v8h-8zM392 480h8v8h-8zM448 480h8v8h-8z"/><path fill="#0ca" d="M680 176h8v8h-8zM536 360h8v8h-8zM568 368h8v8h-8zM560 376h8v8h-8zM464 424h8v8h-8zM472 432h8v8h-8z"/><path fill="#17b" d="M104 184h8v8h-8zM96 208h8v8h-8zM640 208h8v8h-8zM760 288h8v8h-8zM472 344h8v8h-8zM512 360h8v8h-8zM96 392h8v8h-8zM152 488h8v8h-8zM224 552h8v8h-8z"/><path fill="#08c" d="M112 184h8v8h-8zM448 408h8v8h-8zM0 424h8v8h-8zM152 544h8v8h-8z"/><path fill="#012" d="M376 184h8v8h-8zM376 192h8v8h-8zM376 200h8v8h-8zM376 208h8v8h-8zM376 216h8v8h-8zM376 224h8v8h-8zM376 232h8v8h-8zM376 376h8v8h-8zM376 384h8v8h-8zM376 392h8v8h-8zM376 400h8v8h-8zM376 408h8v8h-8zM376 416h8v8h-8zM376 424h8v8h-8z"/><path fill="#494" d="M424 184h8v8h-8zM568 192h8v8h-8zM472 240h8v8h-8zM488 248h8v8h-8zM648 256h8v8h-8zM736 256h8v8h-8zM472 280h8v8h-8zM632 320h8v8h-8zM672 328h8v8h-8zM528 336h8v8h-8zM592 360h8v8h-8z"/><path fill="#102" d="M528 184h8v8h-8zM504 264h8v8h-8zM512 288h8v8h-8zM376 296h8v8h-8zM616 296h8v8h-8zM712 392h8v8h-8zM624 408h8v8h-8z"/><path fill="#213" d="M560 184h8v8h-8zM552 200h8v8h-8zM536 208h8v8h-8zM760 216h8v8h-8zM512 240h8v8h-8zM704 288h8v8h-8zM632 304h8v8h-8zM544 320h8v8h-8zM664 320h8v8h-8zM616 368h8v8h-8z"/><path fill="#197" d="M600 184h8v8h-8zM592 384h8v8h-8zM104 400h8v8h-8z"/><path fill="#1c5" d="M680 184h8v8h-8zM448 312h8v8h-8zM416 320h8v8h-8z"/><path fill="#466" d="M728 184h8v8h-8zM392 520h8v8h-8z"/><path fill="#07d" d="M8 192h8v8h-8zM672 224h8v8h-8zM152 552h8v8h-8zM144 560h8v8h-8z"/><path fill="#0ab" d="M24 192h8v8h-8zM24 416h8v8h-8z"/><path fill="#4b3" d="M440 192h8v8h-8zM536 192h8v8h-8zM512 208h8v8h-8zM480 232h8v8h-8zM640 264h8v8h-8zM408 304h8v8h-8z"/><path fill="#595" d="M544 192h8v8h-8zM512 200h8v8h-8zM536 200h8v8h-8zM512 216h8v8h-8zM576 336h8v8h-8z"/><path fill="#414" d="M584 192h8v8h-8z"/><path fill="#28a" d="M624 192h8v8h-8z"/><path fill="#15e" d="M672 192h8v8h-8zM96 200h8v8h-8zM608 400h8v8h-8z"/><path fill="#19c" d="M16 200h8v8h-8zM688 240h8v8h-8zM736 280h8v8h-8zM744 328h8v8h-8z"/><path fill="#06d" d="M40 200h8v8h-8zM8 416h8v8h-8zM136 488h8v8h-8z"/><path fill="#3c2" d="M496 200h8v8h-8zM424 264h8v8h-8zM424 288h8v8h-8zM496 312h8v8h-8zM504 320h8v8h-8zM520 328h8v8h-8zM520 336h8v8h-8zM600 344h8v8h-8z"/><path fill="#585" d="M504 200h8v8h-8z"/><path fill="#5a5" d="M544 200h8v8h-8zM568 200h8v8h-8z"/><path fill="#536" d="M576 200h8v8h-8zM632 312h8v8h-8zM704 408h8v8h-8zM456 496h8v8h-8z"/><path fill="#363" d="M600 200h8v8h-8zM552 344h8v8h-8zM592 352h8v8h-8z"/><path fill="#196" d="M616 200h8v8h-8z"/><path fill="#1c8" d="M624 200h8v8h-8zM456 320h8v8h-8z"/><path fill="#174" d="M32 208h8v8h-8zM8 400h8v8h-8z"/><path fill="#264" d="M104 208h8v8h-8zM72 240h8v8h-8zM200 528h8v8h-8zM368 576h8v8h-8z"/><path fill="#506" d="M464 208h8v8h-8zM576 232h8v8h-8zM528 240h8v8h-8zM536 256h8v8h-8zM464 264h8v8h-8zM400 280h8v8h-8z"/><path fill="#4c2" d="M504 208h8v8h-8zM648 264h8v8h-8zM480 280h16v8h-16z"/><path fill="#658" d="M544 208h8v8h-8zM568 208h8v8h-8zM480 224h8v8h-8zM400 296h8v8h-8z"/><path fill="#05f" d="M680 208h8v8h-8zM664 216h16v8h-16zM760 296h8v8h-8zM752 312h8v8h-8zM472 352h8v8h-8zM448 360h16v8h-16zM440 368h8v8h-8zM80 376h8v8h-8zM432 376h16v8h-16zM440 384h8v8h-8zM440 392h16v8h-16z"/><path fill="#010" d="M32 216h8v8h-8zM376 248h8v8h-8zM64 368h8v8h-8zM376 440h8v8h-8zM144 456h8v8h-8zM376 456h8v8h-8zM152 464h8v8h-8zM240 536h8v8h-8zM280 544h8v8h-8zM360 608h8v8h-8z"/><path fill="#254" d="M48 216h8v8h-8zM160 488h8v8h-8z"/><path fill="#154" d="M104 216h8v8h-8zM80 352h8v8h-8zM96 360h8v8h-8zM168 488h8v8h-8z"/><path fill="#293" d="M416 216h8v8h-8zM680 256h8v8h-8zM448 488h8v8h-8z"/><path fill="#484" d="M504 216h8v8h-8zM464 224h8v8h-8zM480 256h8v8h-8zM472 288h8v8h-8zM640 288h8v8h-8zM488 296h8v8h-8zM544 336h8v8h-8zM712 376h8v8h-8z"/><path fill="#75b" d="M544 216h8v8h-8zM512 248h8v8h-8zM624 288h8v8h-8z"/><path fill="#73b" d="M568 216h8v8h-8z"/><path fill="#64a" d="M584 216h8v8h-8zM504 256h8v8h-8z"/><path fill="#1d6" d="M632 216h8v8h-8zM752 272h8v8h-8zM392 344h8v8h-8z"/><path fill="#253" d="M56 224h8v8h-8zM64 232h8v8h-8z"/><path fill="#189" d="M96 224h8v8h-8zM408 328h8v8h-8zM472 512h8v8h-8z"/><path fill="#2b2" d="M416 224h8v8h-8z"/><path fill="#75a" d="M520 224h8v8h-8z"/><path fill="#639" d="M528 224h8v8h-8zM504 240h8v8h-8zM616 304h8v8h-8z"/><path fill="#607" d="M552 224h8v8h-8zM536 232h8v8h-8zM616 272h8v8h-8zM384 304h8v8h-8z"/><path fill="#608" d="M568 224h8v8h-8zM552 232h8v8h-8zM520 248h8v8h-8zM528 256h8v8h-8zM608 256h8v8h-8z"/><path fill="#648" d="M600 224h8v8h-8zM384 312h8v8h-8z"/><path fill="#3d2" d="M624 224h8v8h-8zM504 312h8v8h-8z"/><path fill="#1a7" d="M648 224h8v8h-8z"/><path fill="#3a4" d="M760 224h8v8h-8zM464 320h8v8h-8z"/><path fill="#1f5" d="M432 232h8v8h-8zM744 232h8v8h-8z"/><path fill="#538" d="M520 232h8v8h-8zM408 280h8v8h-8zM536 312h8v8h-8z"/><path fill="#668" d="M616 232h8v8h-8z"/><path fill="#283" d="M640 232h8v8h-8z"/><path fill="#1e5" d="M648 232h8v8h-8zM432 248h8v8h-8zM448 304h8v8h-8z"/><path fill="#335" d="M664 232h8v8h-8zM488 440h8v8h-8zM480 448h8v8h-8z"/><path fill="#378" d="M672 232h8v8h-8z"/><path fill="#1d7" d="M736 232h8v8h-8zM512 344h8v8h-8z"/><path fill="#165" d="M96 240h8v8h-8zM128 440h8v8h-8zM136 456h8v8h-8zM304 552h8v8h-8z"/><path fill="#0da" d="M416 240h8v8h-8z"/><path fill="#1e6" d="M432 240h8v8h-8zM424 248h8v8h-8zM664 248h8v8h-8zM680 296h8v8h-8zM456 304h8v8h-8zM488 328h8v8h-8z"/><path fill="#4d2" d="M480 240h8v8h-8z"/><path fill="#4c3" d="M488 240h8v8h-8zM640 296h8v8h-8zM624 320h8v8h-8z"/><path fill="#80b" d="M536 240h8v8h-8z"/><path fill="#71a" d="M608 240h8v8h-8zM528 288h8v8h-8z"/><path fill="#3b2" d="M632 240h8v8h-8z"/><path fill="#188" d="M80 248h8v8h-8zM384 368h8v8h-8zM96 376h8v8h-8zM560 384h8v8h-8zM360 560h8v8h-8z"/><path fill="#143" d="M96 248h8v8h-8zM104 392h8v8h-8zM160 480h8v8h-8z"/><path fill="#1c6" d="M416 248h8v8h-8zM464 416h8v8h-8zM408 512h8v8h-8z"/><path fill="#3d1" d="M472 248h16v8h-16zM480 288h8v8h-8z"/><path fill="#576" d="M496 248h8v8h-8zM496 280h8v8h-8zM592 328h8v8h-8zM592 336h8v8h-8z"/><path fill="#76a" d="M504 248h8v8h-8z"/><path fill="#669" d="M624 248h8v8h-8z"/><path fill="#133" d="M80 256h8v8h-8z"/><path fill="#81c" d="M520 256h8v8h-8z"/><path fill="#505" d="M600 256h8v8h-8zM384 280h8v8h-8z"/><path fill="#628" d="M712 256h8v8h-8zM512 272h8v8h-8z"/><path fill="#548" d="M624 264h8v8h-8zM512 296h8v8h-8z"/><path fill="#729" d="M712 264h8v8h-8z"/><path fill="#2a3" d="M760 264h8v8h-8zM400 320h8v8h-8zM696 368h8v8h-8zM440 496h8v8h-8z"/><path fill="#172" d="M88 272h8v8h-8z"/><path fill="#649" d="M504 272h8v8h-8zM520 296h8v8h-8zM552 320h8v8h-8z"/><path fill="#91e" d="M520 272h8v8h-8z"/><path fill="#709" d="M528 272h8v8h-8z"/><path fill="#606" d="M536 272h8v8h-8z"/><path fill="#325" d="M416 280h8v8h-8zM416 296h8v8h-8zM736 368h8v8h-8zM464 512h8v8h-8z"/><path fill="#679" d="M504 280h8v8h-8z"/><path fill="#507" d="M608 280h8v8h-8zM608 288h8v8h-8z"/><path fill="#485" d="M416 288h8v8h-8z"/><path fill="#808" d="M536 288h8v8h-8zM544 296h8v8h-8z"/><path fill="#90c" d="M600 296h8v8h-8z"/><path fill="#0d8" d="M688 296h8v8h-8zM456 312h8v8h-8z"/><path fill="#518" d="M544 304h8v8h-8z"/><path fill="#708" d="M560 304h8v8h-8zM584 304h8v8h-8z"/><path fill="#74b" d="M608 304h8v8h-8zM592 320h8v8h-8z"/><path fill="#62a" d="M552 312h8v8h-8zM568 320h8v8h-8z"/><path fill="#677" d="M528 320h8v8h-8z"/><path fill="#73a" d="M576 320h8v8h-8z"/><path fill="#586" d="M616 320h8v8h-8zM552 328h8v8h-8zM624 328h8v8h-8z"/><path fill="#151" d="M88 328h8v8h-8z"/><path fill="#1b6" d="M752 328h8v8h-8z"/><path fill="#193" d="M88 336h8v8h-8z"/><path fill="#1d4" d="M480 336h8v8h-8zM712 360h8v8h-8z"/><path fill="#0d9" d="M488 336h8v8h-8z"/><path fill="#577" d="M568 336h8v8h-8z"/><path fill="#4a4" d="M600 336h8v8h-8z"/><path fill="#353" d="M576 344h8v8h-8z"/><path fill="#0c9" d="M512 352h8v8h-8z"/><path fill="#2a7" d="M520 352h8v8h-8zM560 368h8v8h-8zM656 400h8v8h-8zM0 416h8v8h-8zM384 456h8v8h-8zM168 528h8v8h-8z"/><path fill="#284" d="M528 360h8v8h-8z"/><path fill="#17d" d="M72 376h8v8h-8zM160 496h8v8h-8zM256 552h8v8h-8z"/><path fill="#16b" d="M536 376h8v8h-8zM264 560h8v8h-8z"/><path fill="#1bb" d="M608 376h8v8h-8z"/><path fill="#26a" d="M752 376h8v8h-8z"/><path fill="#25a" d="M536 384h8v8h-8zM632 416h8v8h-8zM472 528h8v8h-8z"/><path fill="#23a" d="M752 384h8v8h-8zM608 416h8v8h-8zM648 416h8v8h-8z"/><path fill="#175" d="M40 392h8v8h-8zM16 400h8v8h-8zM152 472h8v8h-8z"/><path fill="#2b5" d="M640 392h8v8h-8zM400 536h8v8h-8z"/><path fill="#252" d="M24 400h8v8h-8z"/><path fill="#24b" d="M672 400h8v8h-8z"/><path fill="#2a9" d="M32 408h8v8h-8z"/><path fill="#15c" d="M480 408h8v8h-8zM728 408h8v8h-8zM96 416h8v8h-8zM152 560h8v8h-8z"/><path fill="#05d" d="M16 416h8v8h-8z"/><path fill="#176" d="M112 416h8v8h-8zM176 496h8v8h-8zM304 560h8v8h-8z"/><path fill="#24a" d="M688 416h8v8h-8z"/><path fill="#396" d="M112 440h8v8h-8z"/><path fill="#168" d="M128 448h8v8h-8z"/><path fill="#2b6" d="M384 472h8v8h-8z"/><path fill="#07c" d="M112 480h8v8h-8zM152 480h8v8h-8z"/><path fill="#2b8" d="M120 480h16v8h-16zM160 520h8v8h-8zM192 544h8v8h-8z"/><path fill="#265" d="M168 520h8v8h-8zM280 552h8v8h-8z"/><path fill="#232" d="M176 536h8v8h-8z"/><path fill="#185" d="M184 536h8v8h-8z"/><path fill="#2b7" d="M168 544h8v8h-8zM232 552h8v8h-8z"/><path fill="#178" d="M256 544h8v8h-8z"/><path fill="#256" d="M424 544h8v8h-8z"/><path fill="#167" d="M288 552h8v8h-8z"/><path fill="#166" d="M296 552h8v8h-8zM360 552h8v8h-8z"/><path fill="#162" d="M312 552h8v8h-8z"/><path fill="#163" d="M352 552h8v8h-8zM296 608h8v8h-8z"/><path fill="#520" d="M760 560h8v8h-8zM744 568h24v8h-24zM736 576h32v8h-32zM720 584h48v8h-48zM704 592h48v8h-48zM688 600h56v8h-56zM672 608h56v8h-56z"/><path fill="#620" d="M752 592h16v8h-16zM744 600h24v8h-24zM728 608h40v8h-40z"/></svg>
<canvas id="cv" width="766" height="613"></canvas>
</div>
<div id="imw">
 <div id="imt"></div>
</div>
<div style="position:absolute;left:296px;top:41px;width:9px;height:141px;background:rgba(5,5,5,0.53)"></div>
<div style="position:absolute;left:297px;top:42.5px;width:7.5px;height:136.5px;border-radius:4px;background:#4f4f4f"></div>
<svg style="position:absolute;left:291px;top:170px" width="15" height="13"><path d="M14,0 L14,9 Q14,12 11,12 L1,12 Z" fill="rgba(66,150,250,0.2)"/></svg>
<svg style="position:absolute;left:19px;top:30px" width="8" height="7"><polygon points="0,0 7,0 3.5,6" fill="#e6e6e6"/></svg>
<div class="ui" style="left:30.6px;top:30px">Settings</div>
<div class="frame" style="left:20.7px;top:47px;width:27.4px;height:14.5px;background:rgba(66,150,250,0.40)"></div>
<div class="ui" style="left:24px;top:50.5px">Exit</div>
<div class="frame" style="left:21px;top:64.3px;width:189px;height:14.6px"></div>
<div class="grab" style="left:40px;top:66px;width:7.3px;height:11.4px"></div>
<div class="ui" style="left:107px;top:68.5px">100</div>
<div class="ui" style="left:213.5px;top:68.5px">Iterations</div>
<div class="frame" style="left:21px;top:82px;width:189px;height:14.6px"></div>
<div class="grab" style="left:23.9px;top:83.7px;width:7.3px;height:11.4px"></div>
<div class="ui" style="left:102px;top:86.5px">1.000</div>
<div class="ui" style="left:213.5px;top:86.5px">Color Speed</div>
<div class="frame" style="left:21px;top:99.8px;width:189px;height:14.6px"></div>
<div class="grab" style="left:25.2px;top:101.5px;width:7.3px;height:11.4px"></div>
<div class="ui" style="left:99px;top:104.5px">20.000</div>
<div class="ui" style="left:213.5px;top:104.5px">Color Repeat</div>
<div class="frame" style="left:20.8px;top:117.1px;width:14.4px;height:14.8px"></div>
<svg class="ck" style="position:absolute;left:20.8px;top:117.1px" width="15" height="15"><polyline points="2.5,8.2 5,11.6 11.9,4.7" fill="none" stroke="#4296fa" stroke-width="1.7"/></svg>
<div class="ui" style="left:38.5px;top:121px">Show Mandelbrot Set</div>
<div class="frame" style="left:20.8px;top:135px;width:14.4px;height:14.8px"></div>
<svg class="ck" style="position:absolute;left:20.8px;top:135px" width="15" height="15"><polyline points="2.5,8.2 5,11.6 11.9,4.7" fill="none" stroke="#4296fa" stroke-width="1.7"/></svg>
<div class="ui" style="left:38.5px;top:139px">Show Julia Set</div>
<div class="frame" style="left:20.8px;top:152.9px;width:14.4px;height:14.8px"></div>
<svg class="ck" style="position:absolute;left:20.8px;top:152.9px" width="15" height="15"><polyline points="2.5,8.2 5,11.6 11.9,4.7" fill="none" stroke="#4296fa" stroke-width="1.7"/></svg>
<div class="ui" style="left:38.5px;top:157px">Solid</div>
<div class="ui" style="left:21px;top:172px">Application average 5.407 ms/frame (185.0 FPS)</div>
<script>
(function(){
var cv=document.getElementById('cv');
var ctx=cv.getContext('2d');
var W=766,H=613;
var img=ctx.createImageData(W,H);
var d=img.data;
var JR=-0.7396, JI=-0.1863;
var stops=[
[2.5,100,34,0],[3.53,90,24,0],[3.88,84,16,0],[4.9,74,4,18],[6.2,60,0,48],[7.3,51,0,74],[8.2,44,0,96],[9.4,31,10,128],[12.2,17,40,203],[15.5,8,70,240],[17.7,0,100,255],[19.2,0,120,255],[22.1,0,152,240],[25,0,184,216],[29.9,0,212,176],[36,16,252,64],[38.5,16,255,40],[51.8,56,224,16],[70,112,104,176],[85,160,32,255],[95,196,0,232],[100,208,0,214]
];
function pal(s,o){
  var l=s;
  if(l<=stops[0][0]){o[0]=stops[0][1];o[1]=stops[0][2];o[2]=stops[0][3];return;}
  for(var k=1;k<stops.length;k++){
    if(l<=stops[k][0]){var a=stops[k-1],b=stops[k];var t=(l-a[0])/(b[0]-a[0]);
      o[0]=a[1]+(b[1]-a[1])*t;o[1]=a[2]+(b[2]-a[2])*t;o[2]=a[3]+(b[3]-a[3])*t;return;}
  }
  var e=stops[stops.length-1];o[0]=e[1];o[1]=e[2];o[2]=e[3];
}
var o=[0,0,0];
var LR=Math.log(256);
var SS=3, FP=0.8, inv=FP/SS, off=0.5-FP/2, ns=SS*SS;
var t0=Date.now();
for(var y=0;y<H;y++){
  for(var x=0;x<W;x++){
    var ar=0,ag=0,ab=0;
    var jul=(x>=383);
    for(var sy=0;sy<SS;sy++){
      var yi=(306.5-(y+off+(sy+0.5)*inv))/383;
      for(var sx=0;sx<SS;sx++){
        var xr=(x+off+(sx+0.5)*inv-383)/383;
        var zr,zi,cr,ci;
        if(!jul){zr=0;zi=0;cr=xr;ci=yi;}else{zr=xr;zi=yi;cr=JR;ci=JI;}
        var i=0,m=0,esc=false,MX=jul?108:100;
        for(i=0;i<MX;i++){
          var zr2=zr*zr,zi2=zi*zi;m=zr2+zi2;
          if(m>256){esc=true;break;}
          zi=2*zr*zi+ci;zr=zr2-zi2+cr;
        }
        if(esc){
          var sn=i-Math.log(Math.log(m)/LR)/Math.LN2;
          pal(sn,o);ar+=o[0];ag+=o[1];ab+=o[2];
        }
      }
    }
    var p=(y*W+x)*4;
    d[p]=ar/ns;d[p+1]=ag/ns;d[p+2]=ab/ns;d[p+3]=255;
  }
}
window.__ft=Date.now()-t0;
ctx.putImageData(img,0,0);
})();
</script>
</body></html>
